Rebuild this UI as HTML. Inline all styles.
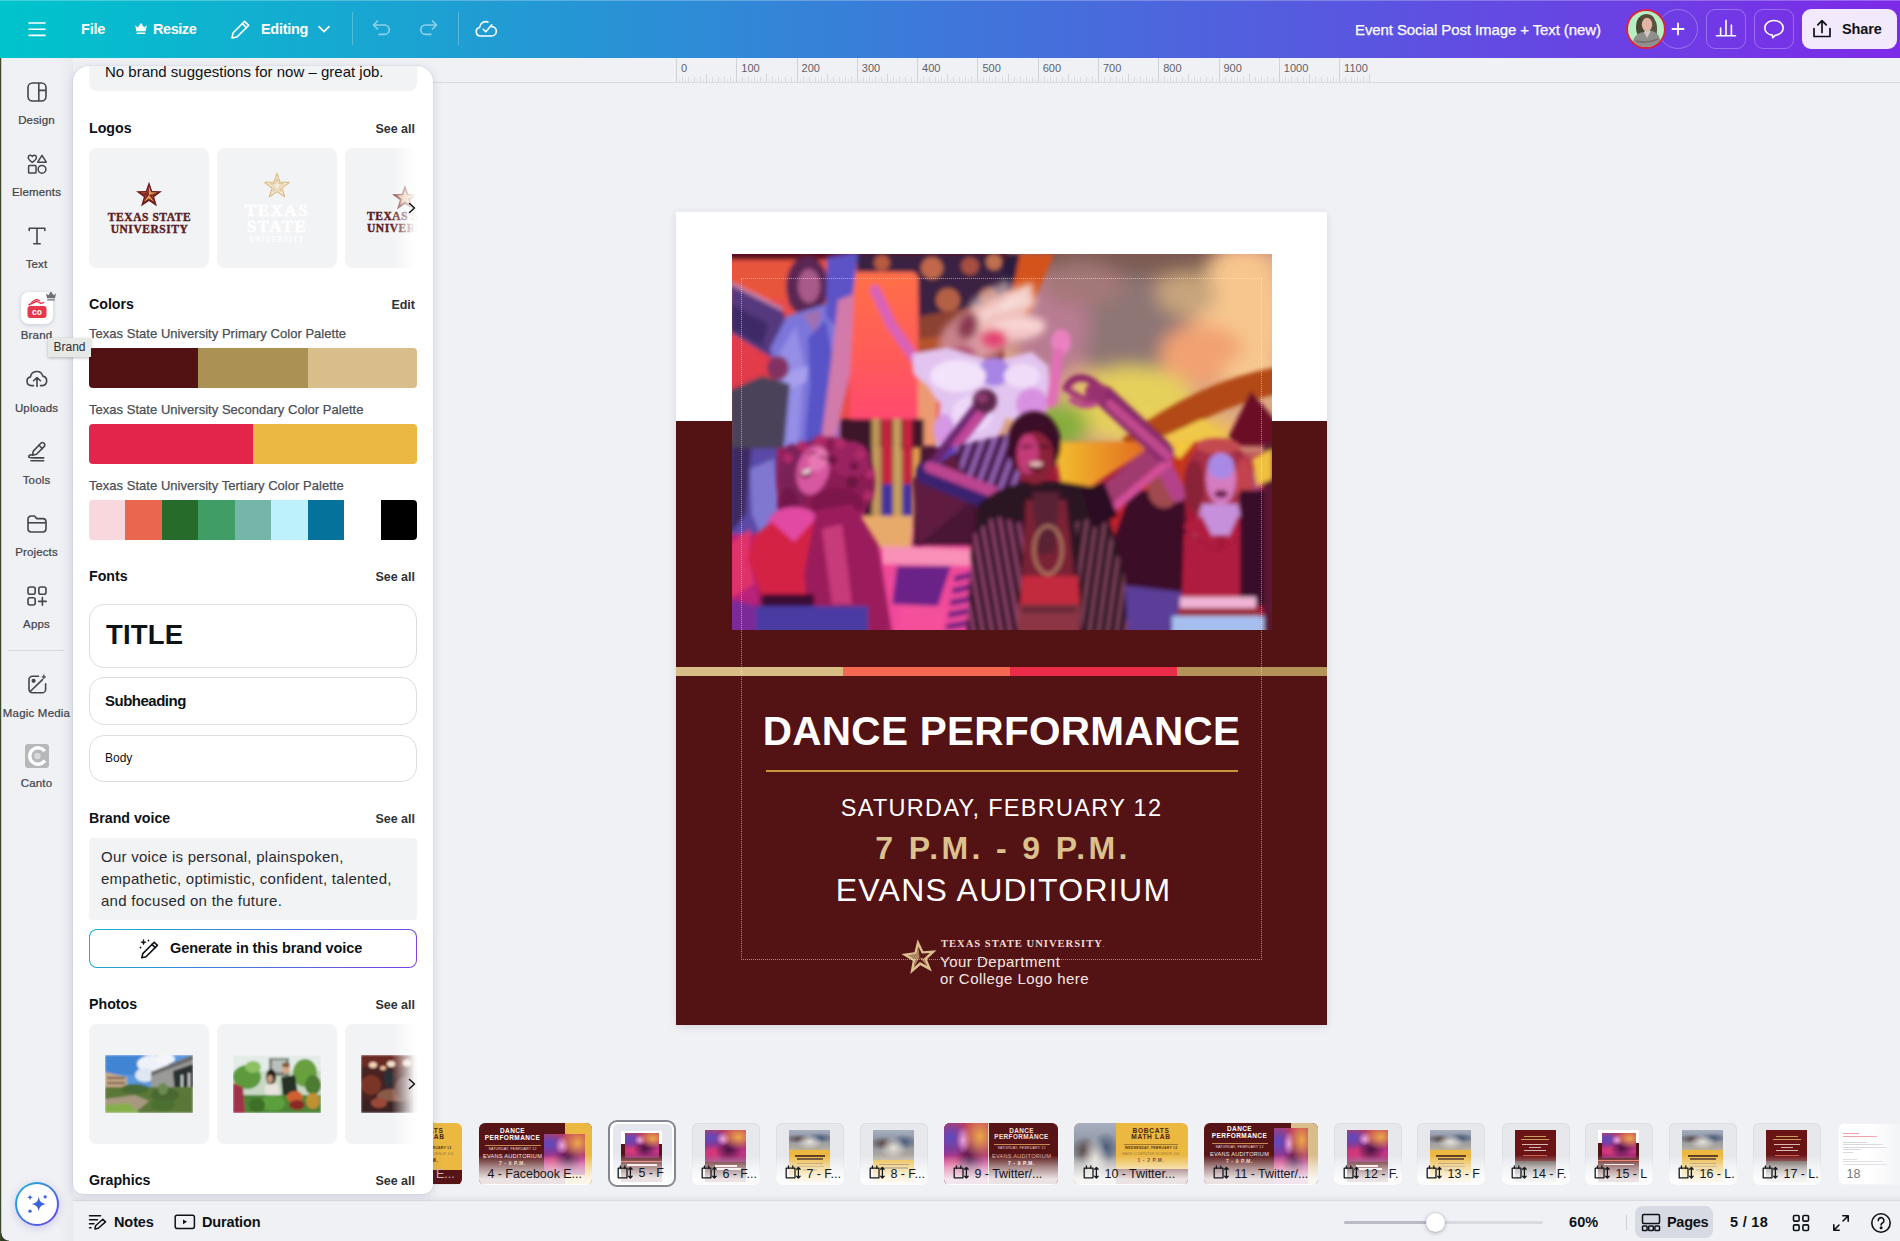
<!DOCTYPE html>
<html>
<head>
<meta charset="utf-8">
<title>Canva</title>
<style>
*{box-sizing:border-box;margin:0;padding:0}
html,body{width:1900px;height:1241px;overflow:hidden}
body{font-family:"Liberation Sans",sans-serif;background:#f0f1f5;position:relative;color:#0d1216}
.abs{position:absolute}
/* ---------- top bar ---------- */
#topbar{position:absolute;left:0;top:0;width:1900px;height:58px;background:linear-gradient(90deg,#00c4cc 0%,#7d2ae8 100%);color:#fff}
#topbar .t{position:absolute;font-size:15px;font-weight:700;white-space:nowrap;line-height:18px}
#topbar svg{position:absolute}
.vdiv{position:absolute;width:1px;background:rgba(255,255,255,.25);top:12px;height:33px}
/* ---------- ruler ---------- */
#ruler{position:absolute;left:433px;top:58px;width:1467px;height:25px;border-bottom:1px solid #d9dbe0;background:#f0f1f5}
#ruler .n{position:absolute;top:4px;font-size:11px;color:#5d6169;line-height:12px}
#ruler .tk{position:absolute;top:0;width:1px;height:24px;background:#cfd2d8}
/* ---------- nav ---------- */
#nav{position:absolute;left:0;top:58px;width:73px;height:1183px;background:#f0f1f5}
.ni{position:absolute;left:0;width:73px;text-align:center;font-size:11.5px;color:#3f434a;line-height:14px;letter-spacing:.15px;-webkit-text-stroke:.22px #3f434a}
.ni svg{display:block;margin:0 auto 0 auto}
/* ---------- panel ---------- */
#panel{position:absolute;left:73px;top:66px;width:360px;height:1128px;background:#fff;border-radius:16px 16px 10px 10px;box-shadow:0 0 0 1px rgba(64,79,109,.04),0 2px 10px rgba(64,79,109,.18);overflow:hidden}
#panel .h{position:absolute;left:16px;font-size:14.2px;font-weight:700;color:#0d1216;line-height:18px}
#panel .sa{position:absolute;right:18px;font-size:12.5px;font-weight:700;color:#2e3339;line-height:16px}
#panel .lbl{position:absolute;left:16px;font-size:13px;-webkit-text-stroke:.25px #4a4f57;letter-spacing:.03px;color:#4a4f57;line-height:16px;white-space:nowrap}
.card{position:absolute;width:120px;height:120px;background:#f2f3f5;border-radius:8px;overflow:hidden}
.pal{position:absolute;left:16px;width:328px;height:40px;border-radius:4px;overflow:hidden;display:flex;box-shadow:inset 0 0 0 1px rgba(0,0,0,.06)}
.pal i{display:block;flex:1;height:40px}
.fbox{position:absolute;left:16px;width:328px;border:1px solid #dadde2;border-radius:15px;background:#fff}
/* ---------- canvas ---------- */
#page{position:absolute;left:676px;top:212px;width:651px;height:813px;background:#fff;overflow:hidden;box-shadow:0 2px 8px rgba(40,50,70,.12)}
/* ---------- bottom ---------- */
#film{position:absolute;left:433px;top:1110px;width:1467px;height:88px;overflow:hidden}
#bbar{position:absolute;left:73px;top:1200px;width:1827px;height:41px;border-top:1px solid #d9dbe1;background:#f0f1f5}
#bsh{position:absolute;left:73px;top:1194px;width:1827px;height:6px;background:linear-gradient(180deg,rgba(64,79,109,0),rgba(64,79,109,.07))}
.th{position:absolute;top:12.5px;height:62.5px;border-radius:6px;overflow:hidden;background:#e6e8ec}
.th .cap{position:absolute;left:0;right:0;bottom:0;height:30px;background:linear-gradient(180deg,rgba(255,255,255,0),rgba(255,255,255,.5) 40%,rgba(255,255,255,.88) 80%);}
.th .ct{position:absolute;bottom:3px;font-size:12.5px;color:#1f2328;white-space:nowrap;line-height:15px;letter-spacing:-.05px}
</style>
</head>
<body>
<div id="topbar">
  <div class="abs" style="left:0;top:0;width:1900px;height:1px;background:rgba(255,255,255,.25)"></div>
  <svg style="left:27px;top:20px" width="20" height="18" viewBox="0 0 20 18" fill="none" stroke="#fff" stroke-width="1.6" stroke-linecap="round"><path d="M2 3h16M2 9.2h16M2 15.4h16"/></svg>
  <div class="t" style="left:81px;top:20px;font-size:14.5px;letter-spacing:-.2px">File</div>
  <svg style="left:134px;top:22px" width="14" height="13" viewBox="0 0 14 13" fill="#fff"><path d="M1.2 3.2l2.6 2.2L7 1l3.2 4.4 2.6-2.2-1.2 6H2.4z"/><rect x="2.6" y="10.6" width="8.8" height="1.4" rx=".6"/></svg>
  <div class="t" style="left:153px;top:20px;font-size:14.5px;letter-spacing:-.45px">Resize</div>
  <svg style="left:230px;top:19px" width="21" height="21" viewBox="0 0 21 21" fill="none" stroke="#fff" stroke-width="1.6" stroke-linejoin="round" stroke-linecap="round"><path d="M14.6 2.4l4 4L7 18l-5 1 1-5z"/><path d="M12.4 4.6l4 4"/></svg>
  <div class="t" style="left:261px;top:20px;font-size:14.5px;letter-spacing:-.3px">Editing</div>
  <svg style="left:317px;top:24px" width="14" height="10" viewBox="0 0 14 10" fill="none" stroke="#fff" stroke-width="1.7" stroke-linecap="round" stroke-linejoin="round"><path d="M2 2.6l5 5 5-5"/></svg>
  <div class="vdiv" style="left:352px"></div>
  <svg style="left:371px;top:19px;opacity:.5" width="22" height="18" viewBox="0 0 22 18" fill="none" stroke="#fff" stroke-width="1.6" stroke-linecap="round" stroke-linejoin="round"><path d="M6.5 2L2.5 6l4 4"/><path d="M3 6h10.5a4.7 4.7 0 010 9.4H8"/></svg>
  <svg style="left:417px;top:19px;opacity:.5" width="22" height="18" viewBox="0 0 22 18" fill="none" stroke="#fff" stroke-width="1.6" stroke-linecap="round" stroke-linejoin="round"><path d="M15.5 2l4 4-4 4"/><path d="M19 6H8.5a4.7 4.7 0 000 9.4H14"/></svg>
  <div class="vdiv" style="left:458px"></div>
  <svg style="left:474px;top:19px" width="24" height="19" viewBox="0 0 24 19" fill="none" stroke="#fff" stroke-width="1.6" stroke-linecap="round" stroke-linejoin="round"><path d="M17.8 7.6A4.7 4.7 0 0117.4 17H6.6a4.3 4.3 0 01-1-8.5A6.3 6.3 0 0114 3"/><path d="M9.2 10.2l2.6 2.6 6-7"/></svg>
  <div class="t" style="left:1355px;top:21px;font-weight:400;font-size:15px;letter-spacing:-.1px;-webkit-text-stroke:.25px #fff">Event Social Post Image + Text (new)</div>
  <!-- plus circle -->
  <div class="abs" style="left:1658px;top:9px;width:40px;height:40px;border-radius:50%;border:1px solid rgba(255,255,255,.28)"></div>
  <svg style="left:1671px;top:22px" width="14" height="14" viewBox="0 0 14 14" stroke="#fff" stroke-width="1.8" stroke-linecap="round"><path d="M7 1.5v11M1.5 7h11"/></svg>
  <!-- avatar -->
  <div class="abs" style="left:1626px;top:9px;width:40px;height:40px;border-radius:50%;background:#d9233f;overflow:hidden">
    <svg class="abs" style="left:2px;top:2px" width="36" height="36" viewBox="0 0 36 36"><defs><clipPath id="avc"><circle cx="18" cy="18" r="18"/></clipPath><filter id="avb"><feGaussianBlur stdDeviation=".6"/></filter></defs><g clip-path="url(#avc)"><rect width="36" height="36" fill="#b6efc2"/><g filter="url(#avb)"><ellipse cx="18.500" cy="9" rx="8" ry="6" fill="#5a4c3a"/><ellipse cx="12.500" cy="16" rx="4.500" ry="10" fill="#4c4634"/><ellipse cx="25.500" cy="18" rx="3.600" ry="10" fill="#5a5242"/><ellipse cx="19" cy="13.500" rx="5.200" ry="6.800" fill="#e2b4a2"/><path d="M3 38 L6 27 Q10 21 16 21 L24 20 Q30 21 32 28 L34 38z" fill="#8e908c"/><path d="M16 21 l3 6 4-7z" fill="#d8c4c0"/><path d="M8 30 q10 3 22 -2" stroke="#7a6a70" stroke-width="1.500" fill="none"/></g></g></svg>
  </div>
  <!-- chart btn -->
  <div class="abs" style="left:1706px;top:9px;width:40px;height:40px;border-radius:9px;border:1px solid rgba(255,255,255,.28)"></div>
  <svg style="left:1715px;top:18px" width="22" height="20" viewBox="0 0 22 20" fill="none" stroke="#fff" stroke-width="1.6" stroke-linecap="round"><path d="M1.5 17.8h19M5.6 17V10M11 17V2.4M16.4 17V7"/></svg>
  <!-- comment btn -->
  <div class="abs" style="left:1754px;top:9px;width:40px;height:40px;border-radius:9px;border:1px solid rgba(255,255,255,.28)"></div>
  <svg style="left:1763px;top:18px" width="22" height="22" viewBox="0 0 22 22" fill="none" stroke="#fff" stroke-width="1.6" stroke-linejoin="round"><path d="M11 2.5c5.2 0 9.2 3.3 9.2 7.4 0 3.700-3.200 6.800-7.600 7.300l-2.900 2.500-.3-2.600C5 16.500 1.800 13.600 1.800 9.900 1.800 5.800 5.800 2.500 11 2.500z"/></svg>
  <!-- share -->
  <div class="abs" style="left:1802px;top:9px;width:95px;height:40px;border-radius:9px;background:#f2e9fd"></div>
  <svg style="left:1812px;top:19px" width="20" height="20" viewBox="0 0 20 20" fill="none" stroke="#0d1216" stroke-width="1.7" stroke-linecap="round" stroke-linejoin="round"><path d="M2 9.500v8h16v-8"/><path d="M10 13.500V2M5.800 5.800L10 1.600l4.200 4.200"/></svg>
  <div class="t" style="left:1842px;top:20px;color:#0d1216;font-size:14.500px;letter-spacing:-.15px">Share</div>
</div>

<div id="ruler">
<div class="abs" style="left:243px;top:21px;width:694.2px;height:3px;background:repeating-linear-gradient(90deg,#e0e2e7 0,#e0e2e7 1px,transparent 1px,transparent 3.014px)"></div>
<div class="abs" style="left:243px;top:19px;width:694.2px;height:5px;background:repeating-linear-gradient(90deg,#d6d9de 0,#d6d9de 1px,transparent 1px,transparent 6.028px)"></div>
<div class="abs" style="left:243px;top:16px;width:694.2px;height:8px;background:repeating-linear-gradient(90deg,#d3d6db 0,#d3d6db 1px,transparent 1px,transparent 30.139px)"></div>
<div class="tk" style="left:243.0px"></div><div class="n" style="left:248.0px">0</div>
<div class="tk" style="left:303.3px"></div><div class="n" style="left:308.3px">100</div>
<div class="tk" style="left:363.6px"></div><div class="n" style="left:368.6px">200</div>
<div class="tk" style="left:423.8px"></div><div class="n" style="left:428.8px">300</div>
<div class="tk" style="left:484.1px"></div><div class="n" style="left:489.1px">400</div>
<div class="tk" style="left:544.4px"></div><div class="n" style="left:549.4px">500</div>
<div class="tk" style="left:604.7px"></div><div class="n" style="left:609.7px">600</div>
<div class="tk" style="left:664.9px"></div><div class="n" style="left:669.9px">700</div>
<div class="tk" style="left:725.2px"></div><div class="n" style="left:730.2px">800</div>
<div class="tk" style="left:785.5px"></div><div class="n" style="left:790.5px">900</div>
<div class="tk" style="left:845.8px"></div><div class="n" style="left:850.8px">1000</div>
<div class="tk" style="left:906.1px"></div><div class="n" style="left:911.1px">1100</div>
</div>
<div id="nav">
  <div class="abs" style="left:0;top:0;width:1px;height:1183px;background:#3d4a2e"></div>
  <div class="abs" style="left:1px;top:0;width:1px;height:1183px;background:#c9cbc9"></div>
  <div class="abs" style="left:58px;top:0;width:15px;height:1183px;background:linear-gradient(90deg,rgba(64,79,109,0),rgba(64,79,109,.045))"></div>
  <!-- Design : page y 82 => nav y 24 -->
  <div class="ni" style="top:23px"><svg width="22" height="22" viewBox="0 0 22 22" fill="none" stroke="#42464d" stroke-width="1.6" stroke-linejoin="round"><rect x="2" y="2" width="18" height="18" rx="4.500"/><path d="M12.800 2v18M12.800 9.400H20"/></svg><div style="margin-top:10px">Design</div></div>
  <!-- Elements -->
  <div class="ni" style="top:95px"><svg width="22" height="22" viewBox="0 0 22 22" fill="none" stroke="#42464d" stroke-width="1.5" stroke-linejoin="round"><path d="M6.300 9.300C3.600 7.400 2.200 6 2.200 4.400c0-2.300 2.900-3 4.100-.9 1.200-2.100 4.100-1.400 4.100.9 0 1.600-1.400 3-4.100 4.900z"/><path d="M16 2.400l4.300 6.800h-8.600z"/><rect x="2.600" y="12.600" width="7.400" height="7.400" rx=".8"/><circle cx="16" cy="16.300" r="3.900"/></svg><div style="margin-top:10px">Elements</div></div>
  <!-- Text -->
  <div class="ni" style="top:167px"><svg width="22" height="22" viewBox="0 0 22 22" fill="none" stroke="#42464d" stroke-width="1.6" stroke-linecap="round" stroke-linejoin="round"><path d="M3.200 5.400V3.200h15.600v2.200M11 3.200v15.400M7.800 18.800h6.400"/></svg><div style="margin-top:10px">Text</div></div>
  <!-- Brand -->
  <div class="abs" style="left:21px;top:234px;width:32px;height:32px;border-radius:8px;background:#fff;box-shadow:0 1px 4px rgba(64,79,109,.25)"></div>
  <svg class="abs" style="left:26px;top:238px" width="22" height="24" viewBox="0 0 22 24"><path d="M3 8.800l7.600-3.600 4.400 2.200 2.600-.8" fill="none" stroke="#e8364a" stroke-width="1.500" stroke-linecap="round" stroke-linejoin="round"/><path d="M5.500 6.200l5-2.800 3 1.200" fill="none" stroke="#e8364a" stroke-width="1.300" stroke-linecap="round" stroke-linejoin="round"/><rect x="1.500" y="10" width="19" height="12" rx="3" fill="#e8364a"/><text x="11" y="19.300" font-family="Liberation Sans" font-weight="700" font-size="8.500" fill="#fff" text-anchor="middle">co</text></svg>
  <svg class="abs" style="left:45px;top:233px" width="12" height="10" viewBox="0 0 14 12" fill="#6b6f76"><path d="M1 2.600l2.800 2.400L7 .6l3.200 4.400L13 2.600l-1.200 6H2.200z"/><rect x="2.400" y="9.800" width="9.200" height="1.500" rx=".6"/></svg>
  <div class="ni" style="top:270px">Brand</div>
  <!-- Uploads -->
  <div class="ni" style="top:309px"><svg width="24" height="22" viewBox="0 0 24 22" fill="none" stroke="#42464d" stroke-width="1.600" stroke-linecap="round" stroke-linejoin="round"><path d="M8.500 18.600H6.400a4.400 4.400 0 01-.9-8.700 6.300 6.300 0 0112.300-.8 4.800 4.800 0 01-.6 9.500h-1.700"/><path d="M12 19.500v-8.600M8.600 13.800L12 10.500l3.400 3.300"/></svg><div style="margin-top:12px">Uploads</div></div>
  <!-- Tools -->
  <div class="ni" style="top:381px"><svg style="margin-top:2px" width="24" height="22" viewBox="0 0 24 22" fill="none" stroke="#42464d" stroke-width="1.600" stroke-linecap="round" stroke-linejoin="round"><path d="M15.800 2.300a2.300 2.300 0 013.300 3.300l-7.600 7.700-4 .900.800-4.100z"/><path d="M14 4.200l3.200 3.300"/><path d="M7.500 13.800c-3.500-.2-4.400 1.600-3.300 2.500 1 .8 3.400.6 14.500.6"/><path d="M6 19.800h12.700"/></svg><div style="margin-top:10px">Tools</div></div>
  <!-- Projects -->
  <div class="ni" style="top:455px"><svg style="margin-top:1px" width="22" height="20" viewBox="0 0 22 20" fill="none" stroke="#42464d" stroke-width="1.600" stroke-linejoin="round"><path d="M2 5.200A3.200 3.200 0 015.200 2h3.300l2.300 2.600h6A3.200 3.200 0 0120 7.800v7A3.200 3.200 0 0116.800 18H5.200A3.200 3.200 0 012 14.800z"/><path d="M2 8.800h18"/></svg><div style="margin-top:11px">Projects</div></div>
  <!-- Apps -->
  <div class="ni" style="top:527px"><svg width="22" height="22" viewBox="0 0 22 22" fill="none" stroke="#42464d" stroke-width="1.600" stroke-linecap="round" stroke-linejoin="round"><rect x="2" y="2" width="7.200" height="7.200" rx="2"/><rect x="12.800" y="2" width="7.200" height="7.200" rx="2"/><rect x="2" y="12.800" width="7.200" height="7.200" rx="2"/><path d="M16.400 12.600v7.600M12.600 16.400h7.600"/></svg><div style="margin-top:10px">Apps</div></div>
  <div class="abs" style="left:8px;top:592px;width:56px;height:1px;background:#d7d9de"></div>
  <!-- Magic Media -->
  <div class="ni" style="top:615px"><svg width="22" height="22" viewBox="0 0 22 22" fill="none" stroke="#42464d" stroke-width="1.600" stroke-linecap="round" stroke-linejoin="round"><path d="M12.500 3.200H6.400A3.400 3.400 0 003 6.600v9.800a3.400 3.400 0 003.400 3.400h9.800a3.400 3.400 0 003.400-3.400v-5.500"/><path d="M4.200 18.500L16.500 6.600"/><circle cx="7.600" cy="7.800" r="1.300" fill="#42464d"/><path d="M17.800 1.800l.5 1.600 1.600.5-1.600.5-.5 1.600-.5-1.600-1.600-.5 1.600-.5z" fill="#42464d" stroke-width=".6"/></svg><div style="margin-top:11px;letter-spacing:.2px">Magic Media</div></div>
  <!-- Canto -->
  <div class="abs" style="left:25px;top:686px;width:24px;height:24px;border-radius:3px;background:#b7b8b9"></div>
  <svg class="abs" style="left:25px;top:686px" width="24" height="24" viewBox="0 0 24 24" fill="none"><path d="M19.600 7.200A8.200 8.200 0 1019.800 16.500" stroke="#fff" stroke-width="3.400" stroke-linecap="butt"/><circle cx="12.400" cy="12" r="3.200" fill="#d9dadb"/></svg>
  <div class="ni" style="top:718px">Canto</div>
  <!-- magic button -->
  <div class="abs" style="left:15px;top:1124px;width:44px;height:44px;border-radius:50%;background:linear-gradient(135deg,#18b9d4,#6a3de8);box-shadow:0 2px 8px rgba(100,80,200,.25)"></div>
  <div class="abs" style="left:17px;top:1126px;width:40px;height:40px;border-radius:50%;background:#fff"></div>
  <svg class="abs" style="left:23px;top:1132px" width="28" height="28" viewBox="0 0 24 24" fill="#3a63d8"><path d="M13.500 5.500c.6 4 1.800 5.600 6.300 6.500-4.500.9-5.700 2.500-6.300 6.500-.6-4-1.800-5.600-6.300-6.500 4.500-.9 5.700-2.500 6.300-6.500z"/><path d="M6 3.600c.3 1.700.8 2.300 2.600 2.700C6.800 6.700 6.300 7.300 6 9c-.3-1.700-.8-2.300-2.600-2.700C5.200 5.900 5.700 5.300 6 3.600z"/><circle cx="19" cy="5.800" r="1.400"/><circle cx="6" cy="18.200" r="1.400"/></svg>
</div>

<div id="page">
  <div class="abs" style="left:0;top:209px;width:651px;height:604px;background:#531214"></div>
  <!-- photo -->
  <svg class="abs" style="left:56px;top:42px" width="540" height="376" viewBox="0 0 540 376" preserveAspectRatio="none">
    <defs>
      <filter id="b2" x="-5%" y="-5%" width="110%" height="110%"><feGaussianBlur stdDeviation="2.2"/></filter>
      <filter id="b4" x="-10%" y="-10%" width="120%" height="120%"><feGaussianBlur stdDeviation="3"/></filter><filter id="b6" x="-10%" y="-10%" width="120%" height="120%"><feGaussianBlur stdDeviation="9"/></filter>
      <linearGradient id="gob" x1="0" y1="0" x2="0" y2="1"><stop offset="0" stop-color="#ff7048"/><stop offset=".6" stop-color="#ff5a5a"/><stop offset="1" stop-color="#ff4a70"/></linearGradient>
      <linearGradient id="gyo" x1="0" y1="0" x2="1" y2="0"><stop offset="0" stop-color="#f4c030"/><stop offset="1" stop-color="#e0601c"/></linearGradient>
      <pattern id="fr" width="9" height="10" patternUnits="userSpaceOnUse" patternTransform="rotate(8)"><rect width="9" height="10" fill="#2a1222"/><rect x="0" width="3" height="10" fill="#8a4a62"/></pattern><pattern id="fr2" width="9" height="10" patternUnits="userSpaceOnUse" patternTransform="rotate(-10)"><rect width="9" height="10" fill="#2a1222"/><rect x="0" width="3" height="10" fill="#a04a78"/></pattern><pattern id="st" width="11" height="11" patternUnits="userSpaceOnUse" patternTransform="rotate(-70)"><rect width="11" height="11" fill="#421848"/><rect y="0" width="11" height="4.500" fill="#9a68b8"/></pattern><clipPath id="pc"><rect x="0" y="0" width="540" height="376"/></clipPath>
    </defs>
    <g clip-path="url(#pc)">
    <rect width="540" height="376" fill="#b02858"/><rect x="-5" y="-5" width="275" height="200" fill="#ea4a4a"/><rect x="-5" y="188" width="275" height="195" fill="#a2205e"/><rect x="270" y="188" width="275" height="195" fill="#a41a3a"/>

        <!-- TOP RIGHT: blurry colourful clouds -->
    <g filter="url(#b6)">
      <rect x="260" y="-10" width="300" height="210" fill="#dba684"/>
      <ellipse cx="400" cy="4" rx="130" ry="20" fill="#7c5c52"/>
      <ellipse cx="395" cy="72" rx="62" ry="52" fill="#8e7674"/>
      <ellipse cx="318" cy="70" rx="40" ry="55" fill="#b87c92"/>
      <ellipse cx="350" cy="30" rx="40" ry="22" fill="#a47878"/>
      <ellipse cx="508" cy="60" rx="42" ry="70" fill="#f7c68e"/>
      <ellipse cx="470" cy="100" rx="42" ry="30" fill="#f2a272"/>
      <ellipse cx="455" cy="40" rx="30" ry="22" fill="#c8a47c"/>
      <ellipse cx="400" cy="150" rx="62" ry="38" fill="#e6d05c"/>
      <ellipse cx="326" cy="172" rx="32" ry="24" fill="#86ae3e"/>
      <ellipse cx="455" cy="182" rx="52" ry="20" fill="#f2c24e"/>
      <ellipse cx="520" cy="120" rx="30" ry="18" fill="#f6c890"/>
    </g>
    <g filter="url(#b2)">
      <polygon points="283,0 322,0 296,62 268,62 268,20" fill="#d4521e"/>
      <polygon points="266,0 288,0 280,38 266,42" fill="#2a1a3c"/>
      <path d="M398,196 Q470,140 548,126" fill="none" stroke="#b24a18" stroke-width="27"/>
      <polygon points="492,192 519,137 548,172 548,192" fill="#6c1028"/>
      <polygon points="420,188 470,165 500,188" fill="#f0c848"/>
    </g>
    <!-- BOTTOM LEFT -->
    <g filter="url(#b2)">
      
      <!-- left purple figure -->
      <rect x="-5" y="188" width="50" height="105" fill="#5a48a8"/>
      <polygon points="-2,188 20,188 14,260 -2,280" fill="#3c2c60"/>
      <polygon points="18,215 42,205 48,260 30,285 20,260" fill="#8078d0"/>
      <rect x="-5" y="280" width="32" height="100" fill="#b82078"/>
      <polygon points="-2,290 18,275 22,330 -2,345" fill="#e0306a"/>
      <!-- bg stripes -->
      <rect x="132" y="188" width="58" height="76" fill="#3c1230"/>
      <rect x="140" y="188" width="9" height="74" fill="#c29a5a"/>
      <rect x="150" y="188" width="10" height="42" fill="#c82040"/><rect x="150" y="230" width="10" height="32" fill="#4232a2"/>
      <rect x="161" y="188" width="9" height="74" fill="#c8a060"/>
      <rect x="171" y="188" width="9" height="42" fill="#c82040"/><rect x="171" y="230" width="9" height="32" fill="#4232a2"/>
      <rect x="181" y="188" width="8" height="74" fill="#e8a050"/>
      <!-- floor -->
      <polygon points="126,262 252,288 275,292 275,380 156,380 140,292" fill="#f04a9a"/>
      <polygon points="128,262 182,262 178,298 140,292" fill="#e8aa6a"/>
      <polygon points="150,292 250,296 250,312 150,310" fill="#f890b8"/>
      <polygon points="165,312 219,312 206,352 160,350" fill="#6a2488"/>
      <g fill="#6a2080"><polygon points="222,322 248,316 248,322 222,328"/><polygon points="220,334 248,328 248,334 220,340"/><polygon points="218,346 248,340 248,346 218,352"/><polygon points="216,358 248,352 248,358 216,364"/><polygon points="214,370 248,364 248,370 214,376"/></g>
      <polygon points="170,352 215,352 210,380 165,380" fill="#f4509a"/>
      <!-- man's dark -->
      <polygon points="188,188 275,188 275,292 180,292 186,240" fill="#4a1434"/>
      
      <polygon points="250,290 275,290 275,380 235,380" fill="#5a1838"/>
      </g>
    <!-- TOP LEFT -->
    <g filter="url(#b2)">
      
      <rect x="-5" y="-5" width="130" height="50" fill="#e8543c"/>
      <rect x="-5" y="-5" width="280" height="11" fill="#5c1020"/>
      <!-- navy pattern -->
      <polygon points="125,0 272,0 272,112 188,112 186,28 125,18" fill="#3a2142"/>
      <circle cx="150" cy="9" r="8" fill="#b85a40"/><circle cx="200" cy="14" r="11" fill="#c06848"/><circle cx="238" cy="12" r="9" fill="#a85040"/>
      <circle cx="216" cy="46" r="12" fill="#b46044"/><circle cx="256" cy="42" r="9" fill="#9a5040"/><circle cx="262" cy="8" r="8" fill="#c07050"/>
      <polygon points="188,62 272,48 272,112 188,112" fill="#8c4232"/>
      <polygon points="186,85 230,80 230,112 186,112" fill="#b4522e"/><polygon points="186,110 206,110 204,192 186,192" fill="#ec9a72"/><rect x="168" y="160" width="13" height="34" fill="#a01424"/>
      <!-- orange block -->
      <rect x="118" y="18" width="68" height="148" rx="6" fill="url(#gob)"/>
      <rect x="108" y="165" width="84" height="28" fill="#3c142a"/>
      <rect x="140" y="165" width="8" height="28" fill="#c09858"/><rect x="150" y="165" width="9" height="28" fill="#c82040"/><rect x="161" y="165" width="8" height="28" fill="#c8a060"/><rect x="171" y="165" width="9" height="28" fill="#c82040"/>
      <!-- woman 1 -->
      <polygon points="-2,28 50,54 58,84 40,104 -2,78" fill="#54387e"/><path d="M0,30 L50,55" stroke="#c684ae" stroke-width="3.500" stroke-linecap="round"/><polygon points="-2,50 36,70 30,92 -2,74" fill="#3e2c66"/>
      <polygon points="-2,80 40,104 40,135 -2,150" fill="#e23a4a"/>
      <ellipse cx="75" cy="32" rx="21" ry="30" fill="#5a2852"/>
      <ellipse cx="77" cy="32" rx="11" ry="17" fill="#a85a8a"/>
      <polygon points="55,62 95,50 112,92 106,194 40,194 46,120 38,95" fill="#7c76da"/>
      <polygon points="70,60 90,56 84,80" fill="#a070b0"/><polygon points="76,84 94,66 100,100 90,194 72,194 78,130" fill="#5852c6"/><polygon points="44,104 64,72 72,110 66,194 42,194 48,130" fill="#948ee6"/><polygon points="52,120 76,112 74,128 50,138" fill="#a8a0ee"/>
      <polygon points="95,4 126,-2 121,40 108,78 94,62" fill="#5c52c6"/>
      <polygon points="106,46 122,40 118,120 101,194 88,194 99,110" fill="#d27aaa"/>
      <polygon points="-2,136 30,122 58,130 52,194 -2,194" fill="#4a4258"/>
      <ellipse cx="46" cy="114" rx="11" ry="12" fill="#823262"/>
      <!-- blond dancer -->
      <g filter="url(#b4)"><ellipse cx="250" cy="78" rx="40" ry="26" fill="#dc9ca4" transform="rotate(-22 250 78)"/>
      <ellipse cx="270" cy="56" rx="36" ry="17" fill="#efc0bc" transform="rotate(-24 270 56)"/>
      <ellipse cx="290" cy="74" rx="24" ry="12" fill="#f4c8c8" transform="rotate(-8 290 74)"/>
      <ellipse cx="284" cy="44" rx="22" ry="7" fill="#f4d4d0" transform="rotate(-38 284 44)"/>
      <ellipse cx="222" cy="84" rx="13" ry="20" fill="#c8848c" transform="rotate(28 222 84)"/>
      <ellipse cx="236" cy="72" rx="10" ry="14" fill="#8a3850" transform="rotate(20 236 72)"/>
      <ellipse cx="262" cy="85" rx="13" ry="10" fill="#e44474"/>
      <ellipse cx="232" cy="100" rx="12" ry="8" fill="#b04870"/>
      <path d="M240,52 q14,-16 38,-22 M248,64 q22,-16 54,-16 M262,72 q22,-6 46,2" stroke="#fbe6e2" stroke-width="3.500" fill="none" stroke-linecap="round"/>
      </g>
      <path d="M143,36 L160,72 L184,106" stroke="#d862b8" stroke-width="10" stroke-linecap="round" stroke-linejoin="round" fill="none"/>
      <polygon points="180,100 215,94 262,108 300,98 316,112 318,150 300,172 274,164 262,194 204,194 208,150 196,132 182,120" fill="#e2c4f0"/><ellipse cx="262" cy="118" rx="16" ry="14" fill="#a884e4"/><ellipse cx="300" cy="150" rx="16" ry="16" fill="#d890e0"/><ellipse cx="212" cy="176" rx="10" ry="16" fill="#d498e4"/>
      <ellipse cx="226" cy="122" rx="28" ry="16" fill="#f2e2fa"/><ellipse cx="240" cy="160" rx="20" ry="18" fill="#eed8f8"/><ellipse cx="290" cy="122" rx="18" ry="12" fill="#f0dcf8"/>
      <ellipse cx="329" cy="88" rx="10" ry="13" fill="#ea80c0"/>
      <path d="M326,100 L320,148" stroke="#e070b4" stroke-width="11" stroke-linecap="round"/>
      
      
    </g>
    <!-- OVER -->
    <g filter="url(#b2)">
      <!-- curly hair woman -->
      <ellipse cx="97" cy="228" rx="46" ry="45" fill="#8a1c54"/>
      <ellipse cx="60" cy="225" rx="14" ry="35" fill="#7a2058"/>
      <ellipse cx="81" cy="216" rx="16" ry="25" fill="#d858a0" transform="rotate(14 81 216)"/>
      <ellipse cx="86" cy="205" rx="9" ry="12" fill="#e878b4" transform="rotate(14 86 205)"/>
      <ellipse cx="74" cy="219" rx="6.500" ry="4.500" fill="#7a1848" transform="rotate(-20 74 219)"/>
      <ellipse cx="74.500" cy="217.500" rx="5" ry="2" fill="#fbe4ee" transform="rotate(-20 74.500 217.500)"/>
      <path d="M76,200 l8,-2 M88,203 l7,1" stroke="#6a1444" stroke-width="2" stroke-linecap="round"/>
      <ellipse cx="118" cy="205" rx="20" ry="18" fill="#9a2460"/><g fill="#b22c6a"><circle cx="70" cy="192" r="5"/><circle cx="88" cy="187" r="6"/><circle cx="108" cy="189" r="5.500"/><circle cx="128" cy="200" r="5"/><circle cx="138" cy="220" r="5"/><circle cx="136" cy="242" r="5"/><circle cx="124" cy="258" r="5"/><circle cx="56" cy="204" r="5"/></g><g fill="#6a143e"><circle cx="100" cy="206" r="5"/><circle cx="120" cy="228" r="6"/><circle cx="108" cy="244" r="5"/><circle cx="122" cy="212" r="4"/></g>
      <ellipse cx="105" cy="250" rx="26" ry="16" fill="#7c184c"/>
      <ellipse cx="56" cy="252" rx="10" ry="18" fill="#701848"/>
      <ellipse cx="62" cy="270" rx="26" ry="17" fill="#e24aa2"/>
      <polygon points="22,282 40,268 62,288 86,262 88,342 30,342 16,305" fill="#d42444"/>
      <polygon points="84,256 120,250 146,290 160,380 78,380 72,320" fill="#9a1a5c"/>
      <polygon points="90,275 110,270 120,350 100,350" fill="#c83a7a"/>
      <rect x="30" y="340" width="52" height="13" fill="#3a1030"/>
      <rect x="24" y="352" width="112" height="30" fill="#4a3aa2"/>
      <polygon points="-2,345 24,352 24,380 -2,380" fill="#7a2a98"/>
    
      <path d="M252,150 L196,222" stroke="#6a2870" stroke-width="17" stroke-linecap="round"/><path d="M248,160 L224,192" stroke="#c2449a" stroke-width="9" stroke-linecap="round"/><path d="M222,196 L202,222" stroke="#5c44c0" stroke-width="7" stroke-linecap="round"/>
      <ellipse cx="253" cy="147" rx="12" ry="12" fill="#5c2648"/><ellipse cx="250" cy="144" rx="6" ry="5" fill="#8a3a70"/>
    </g>
    <!-- BOTTOM RIGHT -->
    <g filter="url(#b2)">
      
      <polygon points="322,188 425,188 348,240 328,226" fill="url(#gyo)"/>
      <polygon points="380,225 425,188 505,188 470,228 440,252" fill="#c4361e"/>
      <polygon points="425,188 462,188 448,205" fill="#f4c83c"/>
      <rect x="372" y="250" width="34" height="90" fill="#c4202e"/>
      <!-- back woman (dark hair) -->
      <polygon points="398,238 452,232 456,340 390,335 380,290" fill="#3a1028"/>
      <ellipse cx="432" cy="236" rx="16" ry="18" fill="#a04850"/>
      <polygon points="380,330 450,338 448,380 384,380" fill="#5c3c98"/>
      <polygon points="372,300 392,330 384,380 366,380" fill="#b01c3c"/>
      <!-- right woman -->
      <path d="M446,240 L428,205" stroke="#b4428a" stroke-width="16" stroke-linecap="round"/>
      <path d="M520,235 L538,200" stroke="#b04478" stroke-width="14" stroke-linecap="round"/>
      <ellipse cx="486" cy="228" rx="34" ry="42" fill="#a62e44"/><ellipse cx="462" cy="232" rx="10" ry="26" fill="#8a2238"/><ellipse cx="512" cy="228" rx="9" ry="24" fill="#c2424e"/><ellipse cx="486" cy="192" rx="22" ry="8" fill="#c44a50"/>
      <ellipse cx="489" cy="225" rx="15" ry="26" fill="#d67cc0"/><ellipse cx="489" cy="212" rx="13" ry="13" fill="#a88ae6"/>
      <ellipse cx="489" cy="240" rx="7" ry="4" fill="#6a2050"/>
      <polygon points="470,250 506,250 512,282 462,282" fill="#c690da"/>
      <polygon points="452,278 486,300 520,278 524,346 450,346" fill="#b01a40"/>
      <polygon points="450,272 470,262 488,298" fill="#b01a40"/><polygon points="522,272 506,262 490,298" fill="#b01a40"/>
      <rect x="508" y="236" width="40" height="116" fill="#38102c"/>
      <polygon points="506,240 524,236 528,350 520,350" fill="#38102c"/>
      <rect x="448" y="343" width="76" height="12" fill="#f0b4d4"/>
      <rect x="446" y="354" width="82" height="9" fill="#9a2030"/>
      <rect x="440" y="362" width="92" height="20" fill="#a6beee"/>
      <rect x="532" y="188" width="12" height="195" fill="#5a1430"/>
      <polygon points="520,205 540,195 540,225 525,232" fill="#f0c040"/>
      <!-- man -->
      <polygon points="222,192 286,178 290,244 238,246" fill="url(#st)"/>
      <polygon points="180,225 222,200 240,246 186,292" fill="#5e1c40"/>
      <path d="M196,219 L262,246" stroke="#3a2470" stroke-width="24" stroke-linecap="round"/>
      <path d="M198,213 L262,238" stroke="#bc4490" stroke-width="12" stroke-linecap="round"/>
      <polygon points="246,250 266,236 296,226 332,228 368,234 388,300 394,380 236,380" fill="#2c1224"/>
      <polygon points="240,282 262,262 292,270 288,380 236,380" fill="url(#fr2)"/>
      <polygon points="344,268 372,262 392,320 396,380 350,380" fill="url(#fr)"/>
      <polygon points="294,246 334,246 346,352 288,352" fill="#7a2436"/>
      <polygon points="300,238 328,238 322,300 306,300" fill="#5a2036"/>
      <ellipse cx="316" cy="296" rx="14" ry="24" fill="none" stroke="#b88468" stroke-width="2.500"/>
      <polygon points="291,322 346,322 348,352 288,352" fill="#c42c3c"/>
      <rect x="286" y="350" width="62" height="32" fill="#8c3644"/>
      <rect x="290" y="352" width="54" height="7" fill="#6a2a38"/>
      <path d="M366,252 L432,196" stroke="#a03a70" stroke-width="25" stroke-linecap="butt"/>
      <path d="M372,262 L438,206" stroke="#d4509a" stroke-width="8" stroke-linecap="butt"/>
      <polygon points="350,236 372,228 386,262 362,274" fill="#2a1020"/>
      <ellipse cx="302" cy="190" rx="27" ry="33" fill="#3a1028"/>
      <ellipse cx="303" cy="204" rx="19" ry="26" fill="#8a2438"/>
      <ellipse cx="296" cy="200" rx="11" ry="20" fill="#c23a78"/>
      <ellipse cx="304" cy="212" rx="8.500" ry="5.500" fill="#5a1428"/>
      <ellipse cx="304" cy="210" rx="7" ry="2.500" fill="#f4c4c4"/>
      <path d="M290,193 l10,-1 M307,192 l10,1" stroke="#3a0c20" stroke-width="2.200" stroke-linecap="round"/>
      <!-- raised hand (upper) -->
      <path d="M432,198 L372,142" stroke="#8a2a6c" stroke-width="21" stroke-linecap="round"/>
      <path d="M436,202 L378,150" stroke="#c04a8c" stroke-width="9" stroke-linecap="round"/>
      <path d="M372,140 q-8,-14 -20,-16 q-12,-2 -18,10" stroke="#8c2868" stroke-width="7" fill="none" stroke-linecap="round"/>
      <path d="M368,146 q-10,2 -18,-2 q-8,-4 -14,-8" stroke="#a03478" stroke-width="6" fill="none" stroke-linecap="round"/>
      <ellipse cx="364" cy="138" rx="11" ry="10" fill="#98306e"/>
      <path d="M340,146 q10,8 22,4" stroke="#b8488a" stroke-width="6" fill="none" stroke-linecap="round"/>
    </g>
<!--PHOTO-TR-->
    <!--PHOTO-TL-->
    <!--PHOTO-BL-->
    <!--PHOTO-BR-->
    </g>
  </svg>
  <!-- stripe -->
  <div class="abs" style="left:0;top:455px;width:167px;height:9px;background:#d9bd86"></div>
  <div class="abs" style="left:167px;top:455px;width:167px;height:9px;background:#f4694f"></div>
  <div class="abs" style="left:334px;top:455px;width:167px;height:9px;background:#ea2c48"></div>
  <div class="abs" style="left:501px;top:455px;width:150px;height:9px;background:#b39358"></div>
    <div id="t1" class="abs" style="left:0;width:651px;top:497px;text-align:center;color:#fff;font-weight:700;font-size:40.5px;line-height:44px;letter-spacing:.3px;padding-left:0px;white-space:nowrap">DANCE PERFORMANCE</div>
  <div class="abs" style="left:90px;top:558px;width:472px;height:2px;background:#c8973a"></div>
  <div id="t2" class="abs" style="left:0;width:651px;top:582px;text-align:center;color:#fff;font-size:23.5px;line-height:28px;letter-spacing:1.3px;white-space:nowrap">SATURDAY, FEBRUARY 12</div>
  <div id="t3" class="abs" style="left:0;width:651px;top:618px;text-align:center;color:#dcc08e;font-weight:700;font-size:32px;line-height:36px;letter-spacing:3.35px;padding-left:3px;white-space:nowrap">7 P.M. - 9 P.M.</div>
  <div id="t4" class="abs" style="left:0;width:651px;top:660px;text-align:center;color:#fff;font-size:32px;line-height:36px;letter-spacing:1.27px;padding-left:4px;white-space:nowrap">EVANS AUDITORIUM</div>
  <!-- logo -->
  <svg class="abs" style="left:223px;top:724.5px" width="41" height="41" viewBox="0 0 38 38"><g transform="rotate(-6 19 19)"><path d="M19 2l4.100 11.600 12.300.3-9.800 7.500 3.500 11.800L19 26.200 8.900 33.200l3.500-11.800-9.800-7.500 12.300-.3z" fill="#dcc090"/><path d="M19 8.500l2.500 7.100 7.500.2-6 4.600 2.200 7.200L19 23.300l-6.200 4.300 2.200-7.200-6-4.600 7.500-.2z" fill="#5a1a18"/><path d="M19 8.500V19l-6.200 8.600L15 20.400l-6-4.600 7.500-.2z M19 19l6.200 8.600-2.200-7.200z" fill="#c9a878" opacity=".75"/></g></svg>
  <div id="l1" class="abs" style="left:265px;top:726px;font-family:'Liberation Serif',serif;font-weight:700;font-size:10.600px;line-height:12px;letter-spacing:.98px;color:#f2dcd6;white-space:nowrap">TEXAS STATE UNIVERSITY<span style="font-size:5px;letter-spacing:0">.</span></div>
  <div id="l2" class="abs" style="left:264px;top:741px;font-size:15px;line-height:17px;color:#f6e8e4;white-space:nowrap;letter-spacing:.5px">Your Department</div>
  <div id="l3" class="abs" style="left:264px;top:758px;font-size:15px;line-height:17px;color:#f6e8e4;white-space:nowrap;letter-spacing:.45px">or College Logo here</div>

  <!-- dashed margin -->
  <div class="abs" style="left:65px;top:66px;width:521px;height:682px;border:1px dotted rgba(255,255,255,.5)"></div>
</div>

<!--FILMSTART--><div id="film">
<div class="th" style="left:-85px;width:113.5px"><div class="abs" style="left:0;top:0;width:113.5px;height:61px;background:#ebb842"></div><div class="abs" style="left:0;top:47px;width:113.5px;height:14px;background:#561416"></div><div class="abs" style="left:17px;top:5px;width:120px;text-align:center;font-size:6.6px;line-height:6.6px;font-weight:700;letter-spacing:0.7px;color:#4a2410;white-space:nowrap">BOBCATS</div><div class="abs" style="left:17px;top:11.6px;width:120px;text-align:center;font-size:6.6px;line-height:6.6px;font-weight:700;letter-spacing:0.7px;color:#4a2410;white-space:nowrap">MATH LAB</div><div class="abs" style="left:17px;top:24.5px;width:120px;text-align:center;font-size:3.6px;line-height:3.6px;font-weight:700;letter-spacing:0.15px;color:#5a3a14;white-space:nowrap">WEDNESDAY, FEBRUARY 12</div><div class="abs" style="left:17px;top:30.5px;width:120px;text-align:center;font-size:3.4px;line-height:3.4px;font-weight:400;letter-spacing:0.2px;color:#9a7a38;white-space:nowrap">MATH COMPUTER SCIENCE 100</div><div class="abs" style="left:17px;top:36.5px;width:120px;text-align:center;font-size:4.8px;line-height:4.8px;font-weight:700;letter-spacing:0.7px;color:#4a2410;white-space:nowrap">1 - 2 P.M.</div><div class="ct" style="left:88px;color:#cdb0b6">E...</div></div>
<div class="th" style="left:45.5px;width:113.5px"><div class="abs" style="left:0;top:0;width:113.5px;height:61px;background:#561416"></div><div class="abs" style="left:86px;top:0;width:27.5px;height:61px;background:#ebb842"></div><div class="abs" style="left:65.5px;top:11px;width:41px;height:41px;background:radial-gradient(ellipse at 82% 22%,#eaa848 0,rgba(234,168,72,0) 36%),radial-gradient(ellipse at 44% 28%,#eaa4e2 0,rgba(234,164,226,0) 22%),radial-gradient(ellipse at 14% 24%,#5a4ac2 0,rgba(90,74,194,0) 36%),radial-gradient(ellipse at 58% 62%,#4a1442 0,rgba(74,20,66,0) 42%),radial-gradient(ellipse at 22% 70%,#d83a78 0,rgba(216,58,120,0) 30%),linear-gradient(180deg,#c23c5a 0%,#a22c7a 45%,#c63688 75%,#8c2262 100%)"></div><div class="abs" style="left:-26px;top:5px;width:120px;text-align:center;font-size:6.5px;line-height:6.5px;font-weight:700;letter-spacing:0.4px;color:#fff;white-space:nowrap">DANCE</div><div class="abs" style="left:-26px;top:12px;width:120px;text-align:center;font-size:6.5px;line-height:6.5px;font-weight:700;letter-spacing:0.4px;color:#fff;white-space:nowrap">PERFORMANCE</div><div class="abs" style="left:6px;top:22px;width:56px;height:.8px;background:#c88a50"></div><div class="abs" style="left:-26px;top:25.5px;width:120px;text-align:center;font-size:3.6px;line-height:3.6px;font-weight:400;letter-spacing:0.15px;color:#f0dcd8;white-space:nowrap">SATURDAY, FEBRUARY 12</div><div class="abs" style="left:-26px;top:31.5px;width:120px;text-align:center;font-size:5.6px;line-height:5.6px;font-weight:400;letter-spacing:0.25px;color:#f6ecea;white-space:nowrap">EVANS AUDITORIUM</div><div class="abs" style="left:-26px;top:39.5px;width:120px;text-align:center;font-size:4.8px;line-height:4.8px;font-weight:700;letter-spacing:0.7px;color:#ecd0a8;white-space:nowrap">7 - 9 P.M.</div><div class="cap"></div><svg class="abs" style="left:-101px;top:41px" width="16" height="16" viewBox="0 0 16 16" fill="none" stroke="#14181c" stroke-width="1.300" stroke-linejoin="round" stroke-linecap="round"><path d="M1.200 4.200h8.800v9.600h-8.800z"/><path d="M3.400 2v2.200M7.800 2v2.200"/><path d="M13.400 3.600v10.400M11.700 5.300l1.700-1.800 1.700 1.800M11.700 12.300l1.700 1.800 1.700-1.800"/></svg><div class="ct" style="left:9px;color:#14181c">4 - Facebook E...</div></div>
<div class="abs" style="left:175.0px;top:10px;width:68px;height:67px;border:2px solid #858891;border-radius:9px;background:#fff"></div><div class="th" style="left:179.5px;top:14px;width:59px;height:59px;border-radius:5px;background:#e4e7ee"><div class="abs" style="left:-4.5px;top:-1px;width:68px;height:61px"><div class="abs" style="left:13.2px;top:7.5px;width:41.3px;height:51.5px;background:#fff"></div><div class="abs" style="left:13.2px;top:20.5px;width:41.3px;height:38.5px;background:#561416"></div><div class="abs" style="left:16.7px;top:10.0px;width:34.3px;height:25px;background:radial-gradient(ellipse at 82% 22%,#eaa848 0,rgba(234,168,72,0) 36%),radial-gradient(ellipse at 44% 28%,#eaa4e2 0,rgba(234,164,226,0) 22%),radial-gradient(ellipse at 14% 24%,#5a4ac2 0,rgba(90,74,194,0) 36%),radial-gradient(ellipse at 58% 62%,#4a1442 0,rgba(74,20,66,0) 42%),radial-gradient(ellipse at 22% 70%,#d83a78 0,rgba(216,58,120,0) 30%),linear-gradient(180deg,#c23c5a 0%,#a22c7a 45%,#c63688 75%,#8c2262 100%)"></div><div class="abs" style="left:13.2px;top:37.5px;width:41.3px;height:1px;background:#e8604a"></div><div class="abs" style="left:18.8px;top:41.0px;width:30px;height:1.6px;background:#f0e0e0"></div><div class="cap"></div><svg class="abs" style="left:9px;top:41px" width="16" height="16" viewBox="0 0 16 16" fill="none" stroke="#14181c" stroke-width="1.300" stroke-linejoin="round" stroke-linecap="round"><path d="M1.200 4.200h8.800v9.600h-8.800z"/><path d="M3.400 2v2.200M7.800 2v2.200"/><path d="M13.400 3.600v10.400M11.700 5.300l1.700-1.800 1.700 1.800M11.700 12.300l1.700 1.800 1.700-1.800"/></svg><div class="ct" style="left:30.5px;color:#14181c">5 - F</div></div></div>
<div class="th" style="left:259px;width:68px;box-shadow:inset 0 0 0 1px rgba(60,70,90,.06)"><div class="abs" style="left:13.2px;top:7.5px;width:41.3px;height:51.5px;background:#561416"></div><div class="abs" style="left:13.2px;top:7.5px;width:41.3px;height:31.6px;background:radial-gradient(ellipse at 82% 22%,#eaa848 0,rgba(234,168,72,0) 36%),radial-gradient(ellipse at 44% 28%,#eaa4e2 0,rgba(234,164,226,0) 22%),radial-gradient(ellipse at 14% 24%,#5a4ac2 0,rgba(90,74,194,0) 36%),radial-gradient(ellipse at 58% 62%,#4a1442 0,rgba(74,20,66,0) 42%),radial-gradient(ellipse at 22% 70%,#d83a78 0,rgba(216,58,120,0) 30%),linear-gradient(180deg,#c23c5a 0%,#a22c7a 45%,#c63688 75%,#8c2262 100%)"></div><div class="abs" style="left:22.8px;top:42.5px;width:22px;height:1.6px;background:#f0e0e0"></div><div class="abs" style="left:18.8px;top:45.7px;width:30px;height:1.6px;background:#f0e0e0"></div><div class="cap"></div><svg class="abs" style="left:9px;top:41px" width="16" height="16" viewBox="0 0 16 16" fill="none" stroke="#14181c" stroke-width="1.300" stroke-linejoin="round" stroke-linecap="round"><path d="M1.200 4.200h8.800v9.600h-8.800z"/><path d="M3.400 2v2.200M7.800 2v2.200"/><path d="M13.400 3.600v10.400M11.700 5.300l1.700-1.800 1.700 1.800M11.700 12.300l1.700 1.800 1.700-1.800"/></svg><div class="ct" style="left:30.5px;color:#14181c">6 - F...</div></div>
<div class="th" style="left:343px;width:68px;box-shadow:inset 0 0 0 1px rgba(60,70,90,.06)"><div class="abs" style="left:13.2px;top:7.5px;width:41.3px;height:51.5px;background:#ebb842"></div><div class="abs" style="left:13.2px;top:7.5px;width:41.3px;height:19.6px;background:radial-gradient(ellipse at 50% 60%,#e4e0d8 0,rgba(228,224,216,0) 45%),radial-gradient(ellipse at 25% 45%,#5a4a48 0,rgba(90,74,72,0) 30%),radial-gradient(ellipse at 75% 40%,#4a5a78 0,rgba(74,90,120,0) 30%),linear-gradient(180deg,#a8b0c0 0%,#8a90a0 40%,#b8b0a0 100%)"></div><div class="abs" style="left:18.8px;top:32.5px;width:30px;height:1.6px;background:#5a3a18"></div><div class="abs" style="left:20.8px;top:35.7px;width:26px;height:1.6px;background:#5a3a18"></div><div class="abs" style="left:20.8px;top:40.5px;width:26px;height:1.2px;background:#a08040"></div><div class="abs" style="left:19.8px;top:43.7px;width:28px;height:1.2px;background:#a08040"></div><div class="abs" style="left:26.8px;top:46.9px;width:14px;height:1.2px;background:#a08040"></div><div class="cap"></div><svg class="abs" style="left:9px;top:41px" width="16" height="16" viewBox="0 0 16 16" fill="none" stroke="#14181c" stroke-width="1.300" stroke-linejoin="round" stroke-linecap="round"><path d="M1.200 4.200h8.800v9.600h-8.800z"/><path d="M3.400 2v2.200M7.800 2v2.200"/><path d="M13.400 3.600v10.400M11.700 5.300l1.700-1.800 1.700 1.800M11.700 12.300l1.700 1.800 1.700-1.800"/></svg><div class="ct" style="left:30.5px;color:#14181c">7 - F...</div></div>
<div class="th" style="left:427px;width:68px;box-shadow:inset 0 0 0 1px rgba(60,70,90,.06)"><div class="abs" style="left:13.2px;top:7.5px;width:41.3px;height:51.5px;background:#ebb842"></div><div class="abs" style="left:13.2px;top:7.5px;width:41.3px;height:30px;background:radial-gradient(ellipse at 50% 60%,#e4e0d8 0,rgba(228,224,216,0) 45%),radial-gradient(ellipse at 25% 45%,#5a4a48 0,rgba(90,74,72,0) 30%),radial-gradient(ellipse at 75% 40%,#4a5a78 0,rgba(74,90,120,0) 30%),linear-gradient(180deg,#a8b0c0 0%,#8a90a0 40%,#b8b0a0 100%)"></div><div class="abs" style="left:18.8px;top:41.5px;width:30px;height:1.4px;background:#8a6a28"></div><div class="abs" style="left:19.8px;top:44.7px;width:28px;height:1.4px;background:#8a6a28"></div><div class="cap"></div><svg class="abs" style="left:9px;top:41px" width="16" height="16" viewBox="0 0 16 16" fill="none" stroke="#14181c" stroke-width="1.300" stroke-linejoin="round" stroke-linecap="round"><path d="M1.200 4.200h8.800v9.600h-8.800z"/><path d="M3.400 2v2.200M7.800 2v2.200"/><path d="M13.400 3.600v10.400M11.700 5.300l1.700-1.800 1.700 1.800M11.700 12.300l1.700 1.800 1.700-1.800"/></svg><div class="ct" style="left:30.5px;color:#14181c">8 - F...</div></div>
<div class="th" style="left:511px;width:113.5px"><div class="abs" style="left:0;top:0;width:113.5px;height:61px;background:#561416"></div><div class="abs" style="left:0;top:0;width:43.5px;height:61px;background:radial-gradient(ellipse at 82% 22%,#eaa848 0,rgba(234,168,72,0) 36%),radial-gradient(ellipse at 44% 28%,#eaa4e2 0,rgba(234,164,226,0) 22%),radial-gradient(ellipse at 14% 24%,#5a4ac2 0,rgba(90,74,194,0) 36%),radial-gradient(ellipse at 58% 62%,#4a1442 0,rgba(74,20,66,0) 42%),radial-gradient(ellipse at 22% 70%,#d83a78 0,rgba(216,58,120,0) 30%),linear-gradient(180deg,#c23c5a 0%,#a22c7a 45%,#c63688 75%,#8c2262 100%)"></div><div class="abs" style="left:43.5px;top:0;width:.8px;height:61px;background:#e8d0c0"></div><div class="abs" style="left:17.5px;top:5.5px;width:120px;text-align:center;font-size:6.4px;line-height:6.4px;font-weight:700;letter-spacing:0.4px;color:#f4e2dc;white-space:nowrap">DANCE</div><div class="abs" style="left:17.5px;top:11.8px;width:120px;text-align:center;font-size:6.4px;line-height:6.4px;font-weight:700;letter-spacing:0.4px;color:#f4e2dc;white-space:nowrap">PERFORMANCE</div><div class="abs" style="left:49.5px;top:21px;width:56px;height:.8px;background:#c88a50"></div><div class="abs" style="left:17.5px;top:24.5px;width:120px;text-align:center;font-size:3.6px;line-height:3.6px;font-weight:400;letter-spacing:0.15px;color:#e4ccc6;white-space:nowrap">SATURDAY, FEBRUARY 12</div><div class="abs" style="left:17.5px;top:31.5px;width:120px;text-align:center;font-size:5.6px;line-height:5.6px;font-weight:400;letter-spacing:0.25px;color:#e6a898;white-space:nowrap">EVANS AUDITORIUM</div><div class="abs" style="left:17.5px;top:39.5px;width:120px;text-align:center;font-size:4.8px;line-height:4.8px;font-weight:700;letter-spacing:0.7px;color:#fbeee8;white-space:nowrap">7 - 9 P.M.</div><div class="cap"></div><svg class="abs" style="left:9px;top:41px" width="16" height="16" viewBox="0 0 16 16" fill="none" stroke="#14181c" stroke-width="1.300" stroke-linejoin="round" stroke-linecap="round"><path d="M1.200 4.200h8.800v9.600h-8.800z"/><path d="M3.400 2v2.200M7.800 2v2.200"/><path d="M13.400 3.600v10.400M11.700 5.300l1.700-1.800 1.700 1.800M11.700 12.300l1.700 1.800 1.700-1.800"/></svg><div class="ct" style="left:30.5px;color:#14181c">9 - Twitter/...</div></div>
<div class="th" style="left:641px;width:113.5px"><div class="abs" style="left:0;top:0;width:113.5px;height:61px;background:#ebb842"></div><div class="abs" style="left:0;top:0;width:42px;height:61px;background:radial-gradient(ellipse at 50% 60%,#e4e0d8 0,rgba(228,224,216,0) 45%),radial-gradient(ellipse at 25% 45%,#5a4a48 0,rgba(90,74,72,0) 30%),radial-gradient(ellipse at 75% 40%,#4a5a78 0,rgba(74,90,120,0) 30%),linear-gradient(180deg,#a8b0c0 0%,#8a90a0 40%,#b8b0a0 100%)"></div><div class="abs" style="left:42px;top:46px;width:71.5px;height:15px;background:#561416"></div><div class="abs" style="left:17px;top:5px;width:120px;text-align:center;font-size:6.6px;line-height:6.6px;font-weight:700;letter-spacing:0.7px;color:#4a2410;white-space:nowrap">BOBCATS</div><div class="abs" style="left:17px;top:11.6px;width:120px;text-align:center;font-size:6.6px;line-height:6.6px;font-weight:700;letter-spacing:0.7px;color:#4a2410;white-space:nowrap">MATH LAB</div><div class="abs" style="left:50px;top:21px;width:54px;height:.8px;background:#a07830"></div><div class="abs" style="left:17px;top:24.5px;width:120px;text-align:center;font-size:3.6px;line-height:3.6px;font-weight:700;letter-spacing:0.15px;color:#5a3a14;white-space:nowrap">WEDNESDAY, FEBRUARY 12</div><div class="abs" style="left:17px;top:30.5px;width:120px;text-align:center;font-size:3.4px;line-height:3.4px;font-weight:400;letter-spacing:0.2px;color:#9a7a38;white-space:nowrap">MATH COMPUTER SCIENCE 100</div><div class="abs" style="left:17px;top:36.5px;width:120px;text-align:center;font-size:4.8px;line-height:4.8px;font-weight:700;letter-spacing:0.7px;color:#4a2410;white-space:nowrap">1 - 2 P.M.</div><div class="cap"></div><svg class="abs" style="left:9px;top:41px" width="16" height="16" viewBox="0 0 16 16" fill="none" stroke="#14181c" stroke-width="1.300" stroke-linejoin="round" stroke-linecap="round"><path d="M1.200 4.200h8.800v9.600h-8.800z"/><path d="M3.400 2v2.200M7.800 2v2.200"/><path d="M13.400 3.600v10.400M11.700 5.300l1.700-1.800 1.700 1.800M11.700 12.300l1.700 1.800 1.700-1.800"/></svg><div class="ct" style="left:30.5px;color:#14181c">10 - Twitter...</div></div>
<div class="th" style="left:771px;width:113.5px"><div class="abs" style="left:0;top:0;width:113.5px;height:61px;background:#561416"></div><div class="abs" style="left:87px;top:0;width:26.5px;height:61px;background:#d9be8b"></div><div class="abs" style="left:70px;top:5.5px;width:34px;height:55.5px;background:radial-gradient(ellipse at 82% 22%,#eaa848 0,rgba(234,168,72,0) 36%),radial-gradient(ellipse at 44% 28%,#eaa4e2 0,rgba(234,164,226,0) 22%),radial-gradient(ellipse at 14% 24%,#5a4ac2 0,rgba(90,74,194,0) 36%),radial-gradient(ellipse at 58% 62%,#4a1442 0,rgba(74,20,66,0) 42%),radial-gradient(ellipse at 22% 70%,#d83a78 0,rgba(216,58,120,0) 30%),linear-gradient(180deg,#c23c5a 0%,#a22c7a 45%,#c63688 75%,#8c2262 100%)"></div><div class="abs" style="left:-24.5px;top:3px;width:120px;text-align:center;font-size:6.5px;line-height:6.5px;font-weight:700;letter-spacing:0.4px;color:#fff;white-space:nowrap">DANCE</div><div class="abs" style="left:-24.5px;top:10px;width:120px;text-align:center;font-size:6.5px;line-height:6.5px;font-weight:700;letter-spacing:0.4px;color:#fff;white-space:nowrap">PERFORMANCE</div><div class="abs" style="left:7.5px;top:20px;width:56px;height:.8px;background:#c88a50"></div><div class="abs" style="left:-24.5px;top:23.5px;width:120px;text-align:center;font-size:3.6px;line-height:3.6px;font-weight:400;letter-spacing:0.15px;color:#f0dcd8;white-space:nowrap">SATURDAY, FEBRUARY 12</div><div class="abs" style="left:-24.5px;top:29.5px;width:120px;text-align:center;font-size:5.6px;line-height:5.6px;font-weight:400;letter-spacing:0.25px;color:#f6ecea;white-space:nowrap">EVANS AUDITORIUM</div><div class="abs" style="left:-24.5px;top:37.5px;width:120px;text-align:center;font-size:4.8px;line-height:4.8px;font-weight:700;letter-spacing:0.7px;color:#ecd0a8;white-space:nowrap">7 - 9 P.M.</div><div class="cap"></div><svg class="abs" style="left:9px;top:41px" width="16" height="16" viewBox="0 0 16 16" fill="none" stroke="#14181c" stroke-width="1.300" stroke-linejoin="round" stroke-linecap="round"><path d="M1.200 4.200h8.800v9.600h-8.800z"/><path d="M3.400 2v2.200M7.800 2v2.200"/><path d="M13.400 3.600v10.400M11.700 5.300l1.700-1.800 1.700 1.800M11.700 12.300l1.700 1.800 1.700-1.800"/></svg><div class="ct" style="left:30.5px;color:#14181c">11 - Twitter/...</div></div>
<div class="th" style="left:900.5px;width:68px;box-shadow:inset 0 0 0 1px rgba(60,70,90,.06)"><div class="abs" style="left:13.2px;top:7.5px;width:41.3px;height:51.5px;background:#561416"></div><div class="abs" style="left:13.2px;top:7.5px;width:41.3px;height:31.6px;background:radial-gradient(ellipse at 82% 22%,#eaa848 0,rgba(234,168,72,0) 36%),radial-gradient(ellipse at 44% 28%,#eaa4e2 0,rgba(234,164,226,0) 22%),radial-gradient(ellipse at 14% 24%,#5a4ac2 0,rgba(90,74,194,0) 36%),radial-gradient(ellipse at 58% 62%,#4a1442 0,rgba(74,20,66,0) 42%),radial-gradient(ellipse at 22% 70%,#d83a78 0,rgba(216,58,120,0) 30%),linear-gradient(180deg,#c23c5a 0%,#a22c7a 45%,#c63688 75%,#8c2262 100%)"></div><div class="abs" style="left:22.8px;top:42.5px;width:22px;height:1.6px;background:#f0e0e0"></div><div class="abs" style="left:18.8px;top:45.7px;width:30px;height:1.6px;background:#f0e0e0"></div><div class="cap"></div><svg class="abs" style="left:9px;top:41px" width="16" height="16" viewBox="0 0 16 16" fill="none" stroke="#14181c" stroke-width="1.300" stroke-linejoin="round" stroke-linecap="round"><path d="M1.200 4.200h8.800v9.600h-8.800z"/><path d="M3.400 2v2.200M7.800 2v2.200"/><path d="M13.400 3.600v10.400M11.700 5.300l1.700-1.800 1.700 1.800M11.700 12.300l1.700 1.800 1.700-1.800"/></svg><div class="ct" style="left:30.5px;color:#14181c">12 - F.</div></div>
<div class="th" style="left:984px;width:68px;box-shadow:inset 0 0 0 1px rgba(60,70,90,.06)"><div class="abs" style="left:13.2px;top:7.5px;width:41.3px;height:51.5px;background:#ebb842"></div><div class="abs" style="left:13.2px;top:7.5px;width:41.3px;height:19.6px;background:radial-gradient(ellipse at 50% 60%,#e4e0d8 0,rgba(228,224,216,0) 45%),radial-gradient(ellipse at 25% 45%,#5a4a48 0,rgba(90,74,72,0) 30%),radial-gradient(ellipse at 75% 40%,#4a5a78 0,rgba(74,90,120,0) 30%),linear-gradient(180deg,#a8b0c0 0%,#8a90a0 40%,#b8b0a0 100%)"></div><div class="abs" style="left:18.8px;top:32.5px;width:30px;height:1.6px;background:#5a3a18"></div><div class="abs" style="left:20.8px;top:35.7px;width:26px;height:1.6px;background:#5a3a18"></div><div class="abs" style="left:20.8px;top:40.5px;width:26px;height:1.2px;background:#a08040"></div><div class="abs" style="left:19.8px;top:43.7px;width:28px;height:1.2px;background:#a08040"></div><div class="abs" style="left:26.8px;top:46.9px;width:14px;height:1.2px;background:#a08040"></div><div class="cap"></div><svg class="abs" style="left:9px;top:41px" width="16" height="16" viewBox="0 0 16 16" fill="none" stroke="#14181c" stroke-width="1.300" stroke-linejoin="round" stroke-linecap="round"><path d="M1.200 4.200h8.800v9.600h-8.800z"/><path d="M3.400 2v2.200M7.800 2v2.200"/><path d="M13.400 3.600v10.400M11.700 5.300l1.700-1.800 1.700 1.800M11.700 12.300l1.700 1.800 1.700-1.800"/></svg><div class="ct" style="left:30.5px;color:#14181c">13 - F</div></div>
<div class="th" style="left:1068.5px;width:68px;box-shadow:inset 0 0 0 1px rgba(60,70,90,.06)"><div class="abs" style="left:13.2px;top:7.5px;width:41.3px;height:51.5px;background:#6a1416"></div><div class="abs" style="left:22.8px;top:13.5px;width:22px;height:1.3px;background:#c8a060"></div><div class="abs" style="left:19.8px;top:16.7px;width:28px;height:1.3px;background:#c8a060"></div><div class="abs" style="left:20.8px;top:21.5px;width:26px;height:0.9px;background:#d8b8b0"></div><div class="abs" style="left:27.8px;top:24.7px;width:12px;height:0.9px;background:#d8b8b0"></div><div class="abs" style="left:22.8px;top:27.9px;width:22px;height:0.9px;background:#d8b8b0"></div><div class="abs" style="left:21.8px;top:32.5px;width:24px;height:0.9px;background:#d05a46"></div><div class="abs" style="left:13.2px;top:38.5px;width:41.3px;height:20.5px;background:linear-gradient(180deg,#5a4a48,#a8a4a0)"></div><div class="cap"></div><svg class="abs" style="left:9px;top:41px" width="16" height="16" viewBox="0 0 16 16" fill="none" stroke="#14181c" stroke-width="1.300" stroke-linejoin="round" stroke-linecap="round"><path d="M1.200 4.200h8.800v9.600h-8.800z"/><path d="M3.400 2v2.200M7.800 2v2.200"/><path d="M13.400 3.600v10.400M11.700 5.300l1.700-1.800 1.700 1.800M11.700 12.300l1.700 1.800 1.700-1.800"/></svg><div class="ct" style="left:30.5px;color:#14181c">14 - F.</div></div>
<div class="th" style="left:1152px;width:68px;box-shadow:inset 0 0 0 1px rgba(60,70,90,.06)"><div class="abs" style="left:13.2px;top:7.5px;width:41.3px;height:51.5px;background:#fff"></div><div class="abs" style="left:13.2px;top:20.5px;width:41.3px;height:38.5px;background:#561416"></div><div class="abs" style="left:16.7px;top:10.0px;width:34.3px;height:25px;background:radial-gradient(ellipse at 82% 22%,#eaa848 0,rgba(234,168,72,0) 36%),radial-gradient(ellipse at 44% 28%,#eaa4e2 0,rgba(234,164,226,0) 22%),radial-gradient(ellipse at 14% 24%,#5a4ac2 0,rgba(90,74,194,0) 36%),radial-gradient(ellipse at 58% 62%,#4a1442 0,rgba(74,20,66,0) 42%),radial-gradient(ellipse at 22% 70%,#d83a78 0,rgba(216,58,120,0) 30%),linear-gradient(180deg,#c23c5a 0%,#a22c7a 45%,#c63688 75%,#8c2262 100%)"></div><div class="abs" style="left:13.2px;top:37.5px;width:41.3px;height:1px;background:#e8604a"></div><div class="abs" style="left:18.8px;top:41.0px;width:30px;height:1.6px;background:#f0e0e0"></div><div class="cap"></div><svg class="abs" style="left:9px;top:41px" width="16" height="16" viewBox="0 0 16 16" fill="none" stroke="#14181c" stroke-width="1.300" stroke-linejoin="round" stroke-linecap="round"><path d="M1.200 4.200h8.800v9.600h-8.800z"/><path d="M3.400 2v2.200M7.800 2v2.200"/><path d="M13.400 3.600v10.400M11.700 5.300l1.700-1.800 1.700 1.800M11.700 12.300l1.700 1.800 1.700-1.800"/></svg><div class="ct" style="left:30.5px;color:#14181c">15 - L</div></div>
<div class="th" style="left:1236px;width:68px;box-shadow:inset 0 0 0 1px rgba(60,70,90,.06)"><div class="abs" style="left:13.2px;top:7.5px;width:41.3px;height:51.5px;background:#ebb842"></div><div class="abs" style="left:13.2px;top:7.5px;width:41.3px;height:19.6px;background:radial-gradient(ellipse at 50% 60%,#e4e0d8 0,rgba(228,224,216,0) 45%),radial-gradient(ellipse at 25% 45%,#5a4a48 0,rgba(90,74,72,0) 30%),radial-gradient(ellipse at 75% 40%,#4a5a78 0,rgba(74,90,120,0) 30%),linear-gradient(180deg,#a8b0c0 0%,#8a90a0 40%,#b8b0a0 100%)"></div><div class="abs" style="left:18.8px;top:32.5px;width:30px;height:1.6px;background:#5a3a18"></div><div class="abs" style="left:20.8px;top:35.7px;width:26px;height:1.6px;background:#5a3a18"></div><div class="abs" style="left:20.8px;top:40.5px;width:26px;height:1.2px;background:#a08040"></div><div class="abs" style="left:19.8px;top:43.7px;width:28px;height:1.2px;background:#a08040"></div><div class="abs" style="left:26.8px;top:46.9px;width:14px;height:1.2px;background:#a08040"></div><div class="cap"></div><svg class="abs" style="left:9px;top:41px" width="16" height="16" viewBox="0 0 16 16" fill="none" stroke="#14181c" stroke-width="1.300" stroke-linejoin="round" stroke-linecap="round"><path d="M1.200 4.200h8.800v9.600h-8.800z"/><path d="M3.400 2v2.200M7.800 2v2.200"/><path d="M13.400 3.600v10.400M11.700 5.300l1.700-1.800 1.700 1.800M11.700 12.300l1.700 1.800 1.700-1.800"/></svg><div class="ct" style="left:30.5px;color:#14181c">16 - L.</div></div>
<div class="th" style="left:1320px;width:68px;box-shadow:inset 0 0 0 1px rgba(60,70,90,.06)"><div class="abs" style="left:13.2px;top:7.5px;width:41.3px;height:51.5px;background:#6a1416"></div><div class="abs" style="left:22.8px;top:13.5px;width:22px;height:1.3px;background:#c8a060"></div><div class="abs" style="left:19.8px;top:16.7px;width:28px;height:1.3px;background:#c8a060"></div><div class="abs" style="left:20.8px;top:21.5px;width:26px;height:0.9px;background:#d8b8b0"></div><div class="abs" style="left:27.8px;top:24.7px;width:12px;height:0.9px;background:#d8b8b0"></div><div class="abs" style="left:22.8px;top:27.9px;width:22px;height:0.9px;background:#d8b8b0"></div><div class="abs" style="left:21.8px;top:32.5px;width:24px;height:0.9px;background:#d05a46"></div><div class="abs" style="left:13.2px;top:38.5px;width:41.3px;height:20.5px;background:linear-gradient(180deg,#5a4a48,#a8a4a0)"></div><div class="cap"></div><svg class="abs" style="left:9px;top:41px" width="16" height="16" viewBox="0 0 16 16" fill="none" stroke="#14181c" stroke-width="1.300" stroke-linejoin="round" stroke-linecap="round"><path d="M1.200 4.200h8.800v9.600h-8.800z"/><path d="M3.400 2v2.200M7.800 2v2.200"/><path d="M13.400 3.600v10.400M11.700 5.300l1.700-1.800 1.700 1.800M11.700 12.300l1.700 1.800 1.700-1.800"/></svg><div class="ct" style="left:30.5px;color:#14181c">17 - L.</div></div>
<div class="th" style="left:1404.5px;width:68px;background:#fff;box-shadow:inset 0 0 0 1px rgba(60,70,90,.06)"><div class="abs" style="left:5.0px;top:10.0px;width:16px;height:1.2px;background:#f0a0a8"></div><div class="abs" style="left:5.0px;top:13.0px;width:34px;height:1.2px;background:#f0a0a8"></div><div class="abs" style="left:5.0px;top:19.0px;width:24px;height:1px;background:#d8d8dc"></div><div class="abs" style="left:5.0px;top:21.6px;width:40px;height:1px;background:#d8d8dc"></div><div class="abs" style="left:5.0px;top:24.2px;width:44px;height:1px;background:#d8d8dc"></div><div class="abs" style="left:5.0px;top:26.8px;width:18px;height:1px;background:#d8d8dc"></div><div class="abs" style="left:5.0px;top:29.4px;width:10px;height:1px;background:#d8d8dc"></div><div class="abs" style="left:5.0px;top:36.0px;width:14px;height:1px;background:#e0e0e4"></div><div class="abs" style="left:5.0px;top:38.6px;width:40px;height:1px;background:#e0e0e4"></div><div class="abs" style="left:5.0px;top:41.2px;width:44px;height:1px;background:#e0e0e4"></div><div class="ct" style="left:9px;color:#73777e">18</div><div class="abs" style="left:30px;top:0;width:38px;height:61px;background:linear-gradient(90deg,rgba(240,241,245,0),rgba(240,241,245,.9))"></div></div>
</div><!--FILMEND-->
<div id="bsh"></div>
<div id="bbar">
  <svg class="abs" style="left:15px;top:13px" width="20" height="16" viewBox="0 0 20 16" fill="none" stroke="#0d1216" stroke-width="1.500" stroke-linecap="round" stroke-linejoin="round"><path d="M1.500 1.800h11M1.500 5.800h8M1.500 9.800h4.500M1.500 13.800h1.500"/><path d="M14.800 5.200l2.700 2.700-7.200 6.400-3.400.8.700-3.400z"/></svg>
  <div class="abs" id="bNotes" style="left:41px;top:12px;font-size:14.500px;font-weight:700;line-height:18px;color:#0d1216;letter-spacing:-.1px">Notes</div>
  <svg class="abs" style="left:101px;top:13px" width="22" height="16" viewBox="0 0 22 16" fill="none" stroke="#0d1216" stroke-width="1.500" stroke-linejoin="round"><rect x="1.200" y="1.200" width="19.200" height="13.200" rx="1.800"/><path d="M9 5.400l4 2.400-4 2.400z" fill="#0d1216" stroke="none"/></svg>
  <div class="abs" id="bDur" style="left:129px;top:12px;font-size:14.500px;font-weight:700;line-height:18px;color:#0d1216;letter-spacing:-.15px">Duration</div>
  <!-- slider -->
  <div class="abs" style="left:1271px;top:20px;width:199px;height:3px;border-radius:2px;background:#d9dbe1"></div>
  <div class="abs" style="left:1271px;top:20px;width:92px;height:3px;border-radius:2px;background:#b9bbc4"></div>
  <div class="abs" style="left:1353px;top:12px;width:19px;height:19px;border-radius:50%;background:#fff;box-shadow:0 1px 4px rgba(40,50,70,.35),0 0 0 .5px rgba(40,50,70,.12)"></div>
  <div class="abs" id="bPct" style="left:1496px;top:12px;font-size:14.500px;font-weight:700;line-height:18px;color:#0d1216;letter-spacing:.1px">60%</div>
  <div class="abs" style="left:1553px;top:14px;width:1px;height:15px;background:#cfd1d8"></div>
  <div class="abs" style="left:1562px;top:5px;width:78px;height:32px;border-radius:8px;background:#d8dae3"></div>
  <svg class="abs" style="left:1568px;top:12px" width="20" height="19" viewBox="0 0 20 19" fill="none" stroke="#0d1216" stroke-width="1.500" stroke-linejoin="round"><rect x="1.500" y="1.500" width="17" height="9" rx="1.200"/><rect x="1.500" y="13" width="4.600" height="4.500" rx=".8"/><rect x="7.700" y="13" width="4.600" height="4.500" rx=".8"/><rect x="13.900" y="13" width="4.600" height="4.500" rx=".8"/></svg>
  <div class="abs" id="bPages" style="left:1594px;top:12px;font-size:14.500px;font-weight:700;line-height:18px;color:#0d1216;letter-spacing:-.3px">Pages</div>
  <div class="abs" id="bCnt" style="left:1657px;top:12px;font-size:14.500px;font-weight:700;line-height:18px;color:#0d1216;letter-spacing:.3px;white-space:nowrap">5 / 18</div>
  <svg class="abs" style="left:1719px;top:13px" width="18" height="18" viewBox="0 0 18 18" fill="none" stroke="#0d1216" stroke-width="1.600" stroke-linejoin="round"><rect x="1.500" y="1.500" width="5.600" height="5.600" rx="1.200"/><rect x="10.900" y="1.500" width="5.600" height="5.600" rx="1.200"/><rect x="1.500" y="10.900" width="5.600" height="5.600" rx="1.200"/><rect x="10.900" y="10.900" width="5.600" height="5.600" rx="1.200"/></svg>
  <svg class="abs" style="left:1759px;top:13px" width="18" height="18" viewBox="0 0 18 18" fill="none" stroke="#0d1216" stroke-width="1.600" stroke-linecap="round" stroke-linejoin="round"><path d="M10.800 1.800h5.400v5.400M16 2l-5 5M7.200 16.200H1.800v-5.400M2 16l5-5"/></svg>
  <svg class="abs" style="left:1797px;top:11px" width="22" height="22" viewBox="0 0 22 22" fill="none" stroke="#0d1216" stroke-width="1.600" stroke-linecap="round"><circle cx="11" cy="11" r="9.200"/><path d="M8.300 8.600a2.800 2.800 0 115 1.600c-.8.900-2.200 1.300-2.200 2.700"/><circle cx="11.100" cy="15.800" r=".7" fill="#0d1216"/></svg>
</div>

<div id="panel">
  <div class="abs" style="left:16px;top:-20px;width:328px;height:45px;border-radius:8px;background:#f2f3f5"></div>
  <div class="abs" id="p0" style="left:32px;top:-3px;font-size:15px;line-height:18px;color:#0d1216;white-space:nowrap">No brand suggestions for now – great job.</div>

  <div class="h" id="hLogos" style="top:53px">Logos</div><div class="sa" style="top:55px">See all</div>
  <!-- logo cards -->
  <div class="card" style="left:16px;top:82px">
    <svg class="abs" style="left:46px;top:33px" width="28" height="27" viewBox="0 0 28 27"><path d="M14 .8l3.200 9.200 9.800.2-7.800 5.900 2.800 9.400L14 19.900 6 25.500l2.800-9.400L1 10.200l9.800-.2z" fill="#6a1c1e"/><path d="M14 5.600l2 5.700 6 .1-4.800 3.600 1.700 5.800L14 17.400l-4.900 3.400 1.700-5.800L6 11.400l6-.1z" fill="#e0a45a"/><path d="M14 5.600V14l-4.900 6.800 1.700-5.800L6 11.400l6-.1zM14 14l8-2.600-4.800 3.600 1.700 5.800z" fill="#8a2a22"/></svg>
    <div class="abs" style="left:0;width:120px;top:64px;text-align:center;font-family:'Liberation Serif',serif;font-weight:700;font-size:11.500px;line-height:11.500px;letter-spacing:.55px;color:#5c1e24;-webkit-text-stroke:.4px #5c1e24;padding-left:1px">TEXAS STATE<br>UNIVERSITY</div>
  </div>
  <div class="card" style="left:144px;top:82px">
    <svg class="abs" style="left:46px;top:24px" width="28" height="27" viewBox="0 0 28 27"><path d="M14 1.500l3 8.700 9.200.2-7.300 5.600 2.600 8.800L14 19.500l-7.500 5.300 2.600-8.800-7.300-5.600 9.200-.2z" fill="#f3ead8" stroke="#dcc08c" stroke-width="1.300" stroke-linejoin="round"/><path d="M14 7l1.600 4.600 4.900.1-3.900 3 1.400 4.700-4-2.800-4 2.800 1.400-4.700-3.900-3 4.900-.1z" fill="none" stroke="#dcc08c" stroke-width=".9"/></svg>
    <div class="abs" style="left:0;width:120px;top:55px;text-align:center;font-family:'Liberation Serif',serif;font-weight:700;font-size:17px;line-height:16px;letter-spacing:1.500px;color:#fff;-webkit-text-stroke:.5px #fff">TEXAS<br>STATE</div>
    <div class="abs" style="left:0;width:120px;top:88px;text-align:center;font-family:'Liberation Serif',serif;font-weight:700;font-size:7.500px;line-height:8px;letter-spacing:.8px;color:#fdfdfe;-webkit-text-stroke:.2px #fff">UNIVERSITY</div>
  </div>
  <div class="card" style="left:272px;top:82px;width:72px;border-radius:8px 0 0 8px">
    <svg class="abs" style="left:46px;top:36px" width="28" height="27" viewBox="0 0 28 27"><path d="M14 .8l3.200 9.200 9.800.2-7.800 5.900 2.800 9.400L14 19.900 6 25.500l2.800-9.400L1 10.200l9.800-.2z" fill="#8a4a48"/><path d="M14 5.600l2 5.700 6 .1-4.800 3.600 1.700 5.800L14 17.400l-4.900 3.400 1.700-5.800L6 11.400l6-.1z" fill="#e6c0a0"/></svg>
    <div class="abs" style="left:22px;top:63px;font-family:'Liberation Serif',serif;font-weight:700;font-size:11.500px;line-height:11.500px;letter-spacing:.55px;color:#5c1e24;-webkit-text-stroke:.4px #5c1e24;white-space:nowrap">TEXAS STATE<br>UNIVERSITY</div>
    <div class="abs" style="left:46px;top:0;width:26px;height:120px;background:linear-gradient(90deg,rgba(255,255,255,0),rgba(255,255,255,.96) 90%)"></div>
  </div>
  <svg class="abs" style="left:334px;top:136px" width="10" height="12" viewBox="0 0 10 12" fill="none" stroke="#0d1216" stroke-width="1.500" stroke-linecap="round" stroke-linejoin="round"><path d="M2.500 1.500L7.500 6l-5 4.500"/></svg>

  <div class="h" id="hColors" style="top:229px">Colors</div><div class="sa" style="top:231px">Edit</div>
  <div class="lbl" id="lb1" style="top:260px">Texas State University Primary Color Palette</div>
  <div class="pal" style="top:282px"><i style="background:#521214"></i><i style="background:#ac9155"></i><i style="background:#d9be8b"></i></div>
  <div class="lbl" id="lb2" style="top:336px">Texas State University Secondary Color Palette</div>
  <div class="pal" style="top:358px"><i style="background:#e4254b"></i><i style="background:#ebb842"></i></div>
  <div class="lbl" id="lb3" style="top:412px">Texas State University Tertiary Color Palette</div>
  <div class="pal" style="top:434px"><i style="background:#f9d8dd"></i><i style="background:#ea674f"></i><i style="background:#276b2b"></i><i style="background:#419d66"></i><i style="background:#74b6a8"></i><i style="background:#bdf1fb"></i><i style="background:#04729a"></i><i style="background:#fff"></i><i style="background:#000"></i></div>

  <div class="h" id="hFonts" style="top:501px">Fonts</div><div class="sa" style="top:503px">See all</div>
  <div class="fbox" style="top:538px;height:64px"><div class="abs" id="fTitle" style="left:16px;top:14px;font-size:27.5px;font-weight:700;letter-spacing:.2px;line-height:32px;color:#0d1216">TITLE</div></div>
  <div class="fbox" style="top:611px;height:48px"><div class="abs" id="fSub" style="left:15px;top:14px;font-size:15px;font-weight:700;line-height:18px;color:#0d1216;letter-spacing:-.5px">Subheading</div></div>
  <div class="fbox" style="top:669px;height:47px"><div class="abs" id="fBody" style="left:15px;top:15px;font-size:12px;line-height:14px;color:#0d1216">Body</div></div>

  <div class="h" id="hVoice" style="top:743px">Brand voice</div><div class="sa" style="top:745px">See all</div>
  <div class="abs" style="left:16px;top:772px;width:328px;height:82px;border-radius:4px;background:#f2f3f5"></div>
  <div class="abs" id="voice" style="left:28px;top:780px;width:310px;font-size:15px;line-height:22px;color:#262b31;letter-spacing:.26px">Our voice is personal, plainspoken,<br>empathetic, optimistic, confident, talented,<br>and focused on the future.</div>
  <div class="abs" style="left:16px;top:863px;width:328px;height:39px;border-radius:8px;background:linear-gradient(135deg,#14b4cf,#7a3fe4)"></div>
  <div class="abs" style="left:17px;top:864px;width:326px;height:37px;border-radius:7px;background:#fff"></div>
  <svg class="abs" style="left:64px;top:871px" width="24" height="24" viewBox="0 0 24 24" fill="none" stroke="#0d1216" stroke-width="1.600" stroke-linecap="round" stroke-linejoin="round"><path d="M17.200 5.200l3.200 3.200L9 19.800l-4.200 1 1-4.200z"/><path d="M15 7.400l3.200 3.200"/><path d="M6.500 2.500l.7 2 2 .7-2 .7-.7 2-.7-2-2-.7 2-.7z" fill="#0d1216" stroke-width=".5"/><circle cx="11.500" cy="3.500" r=".9" fill="#0d1216" stroke="none"/><circle cx="3.500" cy="10.500" r=".9" fill="#0d1216" stroke="none"/></svg>
  <div class="abs" id="gen" style="left:97px;top:873px;font-size:14.500px;font-weight:700;line-height:18px;color:#0d1216;white-space:nowrap;letter-spacing:-.1px">Generate in this brand voice</div>

  <div class="h" id="hPhotos" style="top:929px">Photos</div><div class="sa" style="top:931px">See all</div>
  <div class="card" style="left:16px;top:958px"><svg class="abs" style="left:16px;top:31px" width="88" height="58" viewBox="0 0 88 58"><defs><filter id="tb"><feGaussianBlur stdDeviation="1"/></filter><clipPath id="tc1"><rect width="88" height="58"/></clipPath></defs><g clip-path="url(#tc1)"><g filter="url(#tb)"><rect width="88" height="58" fill="#5a98dc"/><rect width="40" height="20" fill="#3f84d4"/><ellipse cx="48" cy="9" rx="16" ry="9" fill="#eef2f8"/><ellipse cx="40" cy="20" rx="10" ry="7" fill="#dfe7f2"/><ellipse cx="60" cy="4" rx="10" ry="5" fill="#f4f6fa"/><polygon points="46,17 88,0 88,46 46,40" fill="#9a9a98"/><polygon points="46,17 88,0 88,5 46,21" fill="#6a6a6a"/><polygon points="68,16 88,9 88,44 70,40" fill="#2c3030"/><rect x="76" y="20" width="2" height="22" fill="#d0d0d0"/><rect x="83" y="18" width="2" height="25" fill="#d0d0d0"/><polygon points="0,17 22,22 22,36 0,36" fill="#c8a888"/><rect x="2" y="22" width="18" height="2" fill="#6a5848"/><rect x="2" y="27" width="18" height="2" fill="#6a5848"/><rect x="0" y="32" width="88" height="26" fill="#5c7838"/><ellipse cx="30" cy="34" rx="14" ry="5" fill="#4a6a34"/><ellipse cx="60" cy="40" rx="14" ry="7" fill="#486830"/><ellipse cx="58" cy="34" rx="5" ry="6" fill="#6a8a50"/><polygon points="0,44 30,40 44,46 30,58 0,58" fill="#a89880"/><polygon points="0,50 24,48 34,58 0,58" fill="#86b04c"/><ellipse cx="58" cy="50" rx="12" ry="6" fill="#4c7030"/></g></g></svg></div>
  <div class="card" style="left:144px;top:958px"><svg class="abs" style="left:16px;top:31px" width="88" height="58" viewBox="0 0 88 58"><defs><clipPath id="tc2"><rect width="88" height="58"/></clipPath></defs><g clip-path="url(#tc2)"><g filter="url(#tb)"><rect width="88" height="58" fill="#c8d8c4"/><rect width="88" height="16" fill="#e4ece8"/><rect x="36" y="3" width="20" height="18" fill="#7a8078"/><rect x="39" y="5" width="14" height="12" fill="#b8c0bc"/><ellipse cx="14" cy="22" rx="14" ry="12" fill="#5c9a3c"/><ellipse cx="72" cy="18" rx="12" ry="14" fill="#68a040"/><ellipse cx="80" cy="30" rx="8" ry="10" fill="#4c7c30"/><ellipse cx="20" cy="12" rx="8" ry="6" fill="#8cc060"/><ellipse cx="38" cy="22" rx="5" ry="8" fill="#2a1c18"/><ellipse cx="37" cy="24" rx="3" ry="4" fill="#c89878"/><polygon points="32,30 44,28 48,46 32,46" fill="#e8e4dc"/><ellipse cx="53" cy="14" rx="4" ry="5" fill="#d8a888"/><ellipse cx="53" cy="10" rx="4" ry="2.500" fill="#8a5a38"/><polygon points="48,22 62,20 66,46 50,46" fill="#283028"/><rect x="0" y="40" width="88" height="18" fill="#4c8434"/><polygon points="0,28 10,32 12,58 0,58" fill="#a03048"/><ellipse cx="40" cy="48" rx="12" ry="8" fill="#5ca03c"/><ellipse cx="62" cy="42" rx="8" ry="6" fill="#d06030"/><ellipse cx="64" cy="50" rx="8" ry="5" fill="#8a2c28"/><ellipse cx="80" cy="46" rx="7" ry="8" fill="#c09030"/><ellipse cx="24" cy="50" rx="8" ry="7" fill="#3c7028"/></g></g></svg></div>
  <div class="card" style="left:272px;top:958px;width:72px;border-radius:8px 0 0 8px"><svg class="abs" style="left:16px;top:31px" width="56" height="58" viewBox="0 0 56 58"><defs><clipPath id="tc3"><rect width="56" height="58"/></clipPath></defs><g clip-path="url(#tc3)"><g filter="url(#tb)"><rect width="56" height="58" fill="#4a2424"/><rect width="56" height="12" fill="#6a2a20"/><ellipse cx="12" cy="10" rx="4" ry="3" fill="#f0d0b0"/><ellipse cx="30" cy="9" rx="4" ry="3" fill="#f4e0c8"/><ellipse cx="46" cy="8" rx="4" ry="3" fill="#f0d8c0"/><ellipse cx="22" cy="13" rx="3" ry="2" fill="#e8c0a0"/><ellipse cx="28" cy="24" rx="5" ry="10" fill="#2a3038"/><ellipse cx="10" cy="30" rx="10" ry="10" fill="#7a3428"/><ellipse cx="30" cy="42" rx="14" ry="8" fill="#8a5a48"/><ellipse cx="44" cy="34" rx="10" ry="12" fill="#6a4a48"/><rect x="0" y="46" width="56" height="12" fill="#3a2020"/><ellipse cx="18" cy="48" rx="8" ry="5" fill="#9a4a38"/></g></g></svg><div class="abs" style="left:46px;top:0;width:26px;height:120px;background:linear-gradient(90deg,rgba(255,255,255,0),rgba(255,255,255,.96) 90%)"></div></div>
  <svg class="abs" style="left:334px;top:1012px" width="10" height="12" viewBox="0 0 10 12" fill="none" stroke="#0d1216" stroke-width="1.500" stroke-linecap="round" stroke-linejoin="round"><path d="M2.500 1.500L7.500 6l-5 4.500"/></svg>
  <div class="h" id="hGraphics" style="top:1105px">Graphics</div><div class="sa" style="top:1107px">See all</div>
</div>
<!-- tooltip -->
<div class="abs" style="left:48px;top:338px;width:43px;height:19px;background:#e7e9e7;box-shadow:0 1px 3px rgba(0,0,0,.25);font-size:12px;line-height:19px;text-align:center;color:#2a2e33">Brand</div>

<div id="blc" class="abs" style="left:1px;top:1233px;width:8px;height:8px;background:radial-gradient(circle at 100% 0,rgba(0,0,0,0) 7px,#2f3d24 8px)"></div>
</body>
</html>
